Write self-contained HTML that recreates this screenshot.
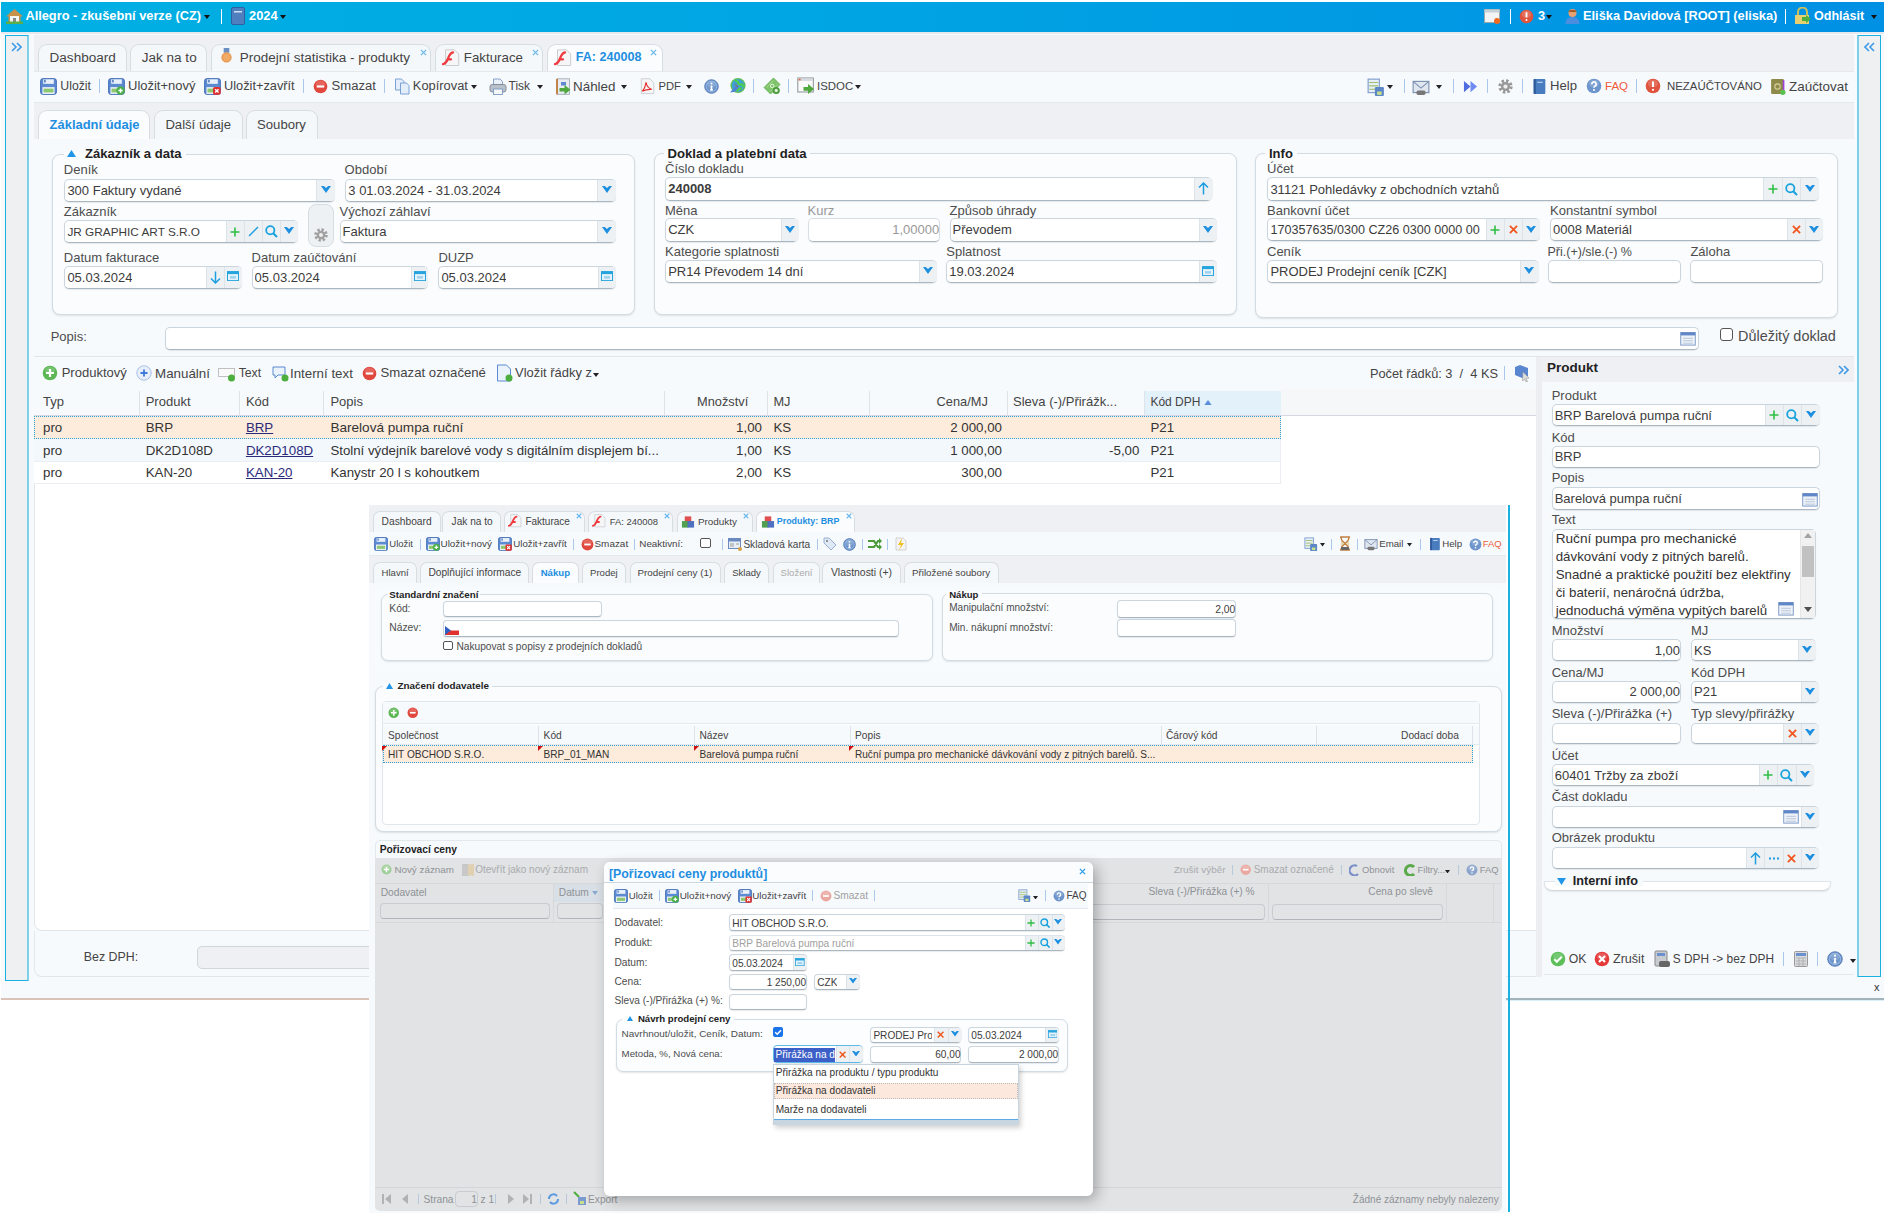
<!DOCTYPE html><html><head><meta charset="utf-8"><style>
html,body{margin:0;padding:0;background:#fff;width:1886px;height:1217px;overflow:hidden;position:relative}
.t{position:absolute;white-space:nowrap;font-family:"Liberation Sans", sans-serif}
.r{position:absolute}
body{font-family:"Liberation Sans", sans-serif}
</style></head><body>
<div class="r" style="left:1.0px;top:32.0px;width:1883.0px;height:967.0px;background:#f7fafd"></div>
<div class="r" style="left:1.0px;top:998.0px;width:399.0px;height:1.5px;background:#dcc3ba"></div>
<div class="r" style="left:1500.0px;top:998.0px;width:384.0px;height:1.5px;background:#a3b4bc"></div>
<div class="r" style="left:1500.0px;top:999.5px;width:384.0px;height:1.0px;background:#d8f0f6"></div>
<div class="r" style="left:1.0px;top:2.0px;width:1883.0px;height:30.0px;background:linear-gradient(90deg,#00b0e3 0%,#00a6e3 40%,#0090e4 100%)"></div>
<div class="r" style="left:1.0px;top:32.0px;width:1883.0px;height:2.0px;background:#e6eaee"></div>
<div class="r" style="left:5.0px;top:35.0px;width:24.0px;height:946.0px;background:#eff0f2;border:1px solid #1ab0e2;border-right:2px solid #7dd0ea;box-sizing:border-box"></div>
<svg class="r" style="left:11px;top:42px" width="11" height="10" viewBox="0 0 11 10"><path d="M1 1l4 4-4 4M6 1l4 4-4 4" stroke="#3d9ae8" stroke-width="1.6" fill="none"/></svg>
<div class="r" style="left:1857.0px;top:35.0px;width:24.0px;height:942.0px;background:#eff0f2;border:1px solid #1ab0e2;border-left:2px solid #7dd0ea;box-sizing:border-box"></div>
<svg class="r" style="left:1864px;top:42px" width="11" height="10" viewBox="0 0 11 10"><path d="M5 1L1 5l4 4M10 1L6 5l4 4" stroke="#3d9ae8" stroke-width="1.6" fill="none"/></svg>
<div class="t" style="left:1874.0px;top:980.0px;font-size:11px;line-height:14px;color:#333;font-weight:400;">x</div>
<svg class="r" style="left:5.0px;top:8.0px" width="19" height="16" viewBox="0 0 19 16"><path d="M9.5 1L1 8.5h2.5V14h12V8.5H18z" fill="#c8924a"/><rect x="5" y="8" width="9" height="6.5" fill="#f4f4f4"/><rect x="8" y="10" width="3" height="4.5" fill="#888"/><rect x="1" y="13.5" width="17" height="2.5" fill="#5cae48"/></svg>
<div class="t" style="left:25.4px;top:7.8px;font-size:12.81px;line-height:16px;color:#fff;font-weight:700;">Allegro - zkušební verze (CZ)</div>
<svg class="r" style="left:203.5px;top:14.5px" width="6" height="4" viewBox="0 0 6 4"><path d="M0 0h6L3 4z" fill="#111"/></svg>
<div class="r" style="left:220.5px;top:9.0px;width:1.3px;height:15.0px;background:#fff"></div>
<svg class="r" style="left:231.0px;top:7.0px" width="14" height="18" viewBox="0 0 14 18"><rect x="0.5" y="0.5" width="13" height="17" rx="1.5" fill="#4f7fbf" stroke="#2f5f9f"/><rect x="3" y="4" width="8" height="1.5" fill="#cfe0f5"/></svg>
<div class="t" style="left:249.0px;top:7.8px;font-size:12.86px;line-height:16px;color:#fff;font-weight:700;">2024</div>
<svg class="r" style="left:280.0px;top:14.5px" width="6" height="4" viewBox="0 0 6 4"><path d="M0 0h6L3 4z" fill="#111"/></svg>
<svg class="r" style="left:1483.5px;top:9.0px" width="17" height="15" viewBox="0 0 17 15"><rect x="0.5" y="0.5" width="15" height="13" fill="#f2f4f6" stroke="#9aa"/><rect x="0.5" y="0.5" width="15" height="3" fill="#c8d0d8"/><circle cx="13" cy="12" r="3" fill="#ee6a20"/></svg>
<div class="r" style="left:1509.5px;top:9.0px;width:1.3px;height:15.0px;background:#fff"></div>
<svg class="r" style="left:1518.5px;top:9.0px" width="15" height="15" viewBox="0 0 16 16"><circle cx="8" cy="8" r="7.3" fill="#e0543f"/><ellipse cx="8" cy="5.5" rx="5" ry="3.8" fill="#fff" opacity="0.16"/><path d="M8 3.5v5.5" stroke="#fff" stroke-width="2"/><circle cx="8" cy="11.8" r="1.1" fill="#fff"/></svg>
<div class="t" style="left:1538.0px;top:7.8px;font-size:12.8px;line-height:16px;color:#fff;font-weight:700;">3</div>
<svg class="r" style="left:1546.0px;top:14.5px" width="6" height="4" viewBox="0 0 6 4"><path d="M0 0h6L3 4z" fill="#111"/></svg>
<svg class="r" style="left:1565.0px;top:8.0px" width="15" height="16" viewBox="0 0 15 16"><circle cx="7.5" cy="5" r="4" fill="#e8a070"/><path d="M3.5 4c0-3 8-3 8 0" fill="#a05a2a"/><path d="M0.5 16c0-5 3-7 7-7s7 2 7 7z" fill="#4a8ee0"/></svg>
<div class="t" style="left:1583.0px;top:7.8px;font-size:12.82px;line-height:16px;color:#fff;font-weight:700;">Eliška Davidová [ROOT] (eliska)</div>
<div class="r" style="left:1785.0px;top:9.0px;width:1.3px;height:15.0px;background:#fff"></div>
<svg class="r" style="left:1794.0px;top:7.0px" width="17" height="18" viewBox="0 0 17 18"><path d="M4 8V5a4.5 4.5 0 0 1 9 0v3" stroke="#c8c060" stroke-width="2" fill="none"/><rect x="1" y="8" width="14" height="9" fill="#e8d070"/><path d="M8 10h4V8l5 4-5 4v-2H8z" fill="#4cae3c"/></svg>
<div class="t" style="left:1814.0px;top:7.8px;font-size:12.57px;line-height:16px;color:#fff;font-weight:700;">Odhlásit</div>
<svg class="r" style="left:1871.0px;top:14.5px" width="6" height="4" viewBox="0 0 6 4"><path d="M0 0h6L3 4z" fill="#111"/></svg>
<div class="r" style="left:34.0px;top:35.0px;width:1820.0px;height:75.0px;background:#eef0f3"></div>
<div class="r" style="left:38.0px;top:44.0px;width:89.0px;height:27.0px;box-sizing:border-box;background:#f5f8fb;border:1px solid #d6dde3;border-bottom:none;border-radius:9px 9px 0 0"></div>
<div class="t" style="left:49.6px;top:48.7px;font-size:13.53px;line-height:17px;color:#444;font-weight:400;">Dashboard</div>
<div class="r" style="left:130.0px;top:44.0px;width:77.0px;height:27.0px;box-sizing:border-box;background:#f5f8fb;border:1px solid #d6dde3;border-bottom:none;border-radius:9px 9px 0 0"></div>
<div class="t" style="left:141.8px;top:48.7px;font-size:13.53px;line-height:17px;color:#444;font-weight:400;">Jak na to</div>
<div class="r" style="left:210.7px;top:44.0px;width:220.7px;height:27.0px;box-sizing:border-box;background:#f5f8fb;border:1px solid #d6dde3;border-bottom:none;border-radius:9px 9px 0 0"></div>
<svg class="r" style="left:219.0px;top:48.0px" width="15" height="15" viewBox="0 0 16 16"><rect x="5" y="0" width="6" height="5" fill="#6a8fc0"/><circle cx="8" cy="10" r="5.5" fill="#e89a52"/><circle cx="8" cy="10" r="3.8" fill="#f0ab68"/></svg>
<div class="t" style="left:239.8px;top:48.7px;font-size:13.49px;line-height:17px;color:#444;font-weight:400;">Prodejní statistika - produkty</div>
<svg class="r" style="left:419.5px;top:48.5px" width="7" height="7" viewBox="0 0 8 8"><path d="M1 1l6 6M7 1l-6 6" stroke="#6ab8ec" stroke-width="1.5"/></svg>
<div class="r" style="left:434.8px;top:44.0px;width:108.6px;height:27.0px;box-sizing:border-box;background:#f5f8fb;border:1px solid #d6dde3;border-bottom:none;border-radius:9px 9px 0 0"></div>
<svg class="r" style="left:441.6px;top:49.0px" width="18" height="18" viewBox="0 0 18 18"><path d="M3.5 0.8h9l4.2 4.2V16.5H3.5z" fill="#f6f6f6" stroke="#c4c8cc" stroke-width="0.9"/><path d="M1 15.2C3.5 14.8 5 12 6 9.5S8 3.8 11 3.3M5.6 10.3h3.4" stroke="#ee3a40" stroke-width="2.3" fill="none" stroke-linecap="round"/></svg>
<div class="t" style="left:463.8px;top:48.7px;font-size:13.31px;line-height:17px;color:#444;font-weight:400;">Fakturace</div>
<svg class="r" style="left:531.8px;top:48.5px" width="7" height="7" viewBox="0 0 8 8"><path d="M1 1l6 6M7 1l-6 6" stroke="#6ab8ec" stroke-width="1.5"/></svg>
<div class="r" style="left:546.7px;top:44.0px;width:116.3px;height:27.0px;box-sizing:border-box;background:#fafcfe;border:1px solid #d6dde3;border-bottom:none;border-radius:9px 9px 0 0"></div>
<svg class="r" style="left:553.6px;top:49.0px" width="18" height="18" viewBox="0 0 18 18"><path d="M3.5 0.8h9l4.2 4.2V16.5H3.5z" fill="#f6f6f6" stroke="#c4c8cc" stroke-width="0.9"/><path d="M1 15.2C3.5 14.8 5 12 6 9.5S8 3.8 11 3.3M5.6 10.3h3.4" stroke="#ee3a40" stroke-width="2.3" fill="none" stroke-linecap="round"/></svg>
<div class="t" style="left:575.8px;top:49.2px;font-size:12.56px;line-height:16px;color:#1f8ee0;font-weight:700;">FA: 240008</div>
<svg class="r" style="left:650.1px;top:48.5px" width="7" height="7" viewBox="0 0 8 8"><path d="M1 1l6 6M7 1l-6 6" stroke="#6ab8ec" stroke-width="1.5"/></svg>
<div class="r" style="left:34.0px;top:71.0px;width:1820.0px;height:31.5px;background:#f7fafd;border-top:1px solid #e4e9ee;border-bottom:1px solid #e4e9ee;box-sizing:border-box"></div>
<svg class="r" style="left:40.0px;top:77.7px" width="17" height="17" viewBox="0 0 16 16"><rect x="0.6" y="0.6" width="14.8" height="14.8" rx="2" fill="#5d8bd2" stroke="#3b68b3" stroke-width="0.9"/><rect x="3" y="1.2" width="10" height="4.3" fill="#e9f0fa"/><rect x="4" y="1.6" width="1.3" height="2.6" fill="#3b68b3"/><rect x="2.3" y="8.6" width="11.4" height="6.4" fill="#eef3fa"/><rect x="3.3" y="10" width="9.4" height="3.6" fill="#8cc870"/></svg>
<div class="t" style="left:60.3px;top:78.7px;font-size:12.27px;line-height:15px;color:#444;font-weight:400;">Uložit</div>
<div class="r" style="left:99.0px;top:79.2px;width:1.0px;height:14.0px;background:#a9c8ec"></div>
<svg class="r" style="left:108.0px;top:77.7px" width="17" height="17" viewBox="0 0 16 16"><rect x="0.6" y="0.6" width="14.8" height="14.8" rx="2" fill="#5d8bd2" stroke="#3b68b3" stroke-width="0.9"/><rect x="3" y="1.2" width="10" height="4.3" fill="#e9f0fa"/><rect x="4" y="1.6" width="1.3" height="2.6" fill="#3b68b3"/><rect x="2.3" y="8.6" width="11.4" height="6.4" fill="#eef3fa"/><rect x="3.3" y="10" width="9.4" height="3.6" fill="#8cc870"/><circle cx="11.8" cy="11.8" r="4" fill="#4cb04a"/><path d="M9.8 11.8h4M11.8 9.8v4" stroke="#fff" stroke-width="1.4"/></svg>
<div class="t" style="left:128.0px;top:78.2px;font-size:12.99px;line-height:16px;color:#444;font-weight:400;">Uložit+nový</div>
<svg class="r" style="left:204.4px;top:77.7px" width="17" height="17" viewBox="0 0 16 16"><rect x="0.6" y="0.6" width="14.8" height="14.8" rx="2" fill="#5d8bd2" stroke="#3b68b3" stroke-width="0.9"/><rect x="3" y="1.2" width="10" height="4.3" fill="#e9f0fa"/><rect x="4" y="1.6" width="1.3" height="2.6" fill="#3b68b3"/><rect x="2.3" y="8.6" width="11.4" height="6.4" fill="#eef3fa"/><rect x="3.3" y="10" width="9.4" height="3.6" fill="#8cc870"/><rect x="8.5" y="8.5" width="7.2" height="7.2" rx="1.5" fill="#e03030"/><path d="M10.5 10.5l3.2 3.2M13.7 10.5l-3.2 3.2" stroke="#fff" stroke-width="1.3"/></svg>
<div class="t" style="left:224.0px;top:78.2px;font-size:12.79px;line-height:16px;color:#444;font-weight:400;">Uložit+zavřít</div>
<div class="r" style="left:303.0px;top:79.2px;width:1.0px;height:14.0px;background:#a9c8ec"></div>
<svg class="r" style="left:313.0px;top:78.7px" width="15" height="15" viewBox="0 0 16 16"><circle cx="8" cy="8" r="7.3" fill="#e0483e"/><ellipse cx="8" cy="5.5" rx="5" ry="3.8" fill="#fff" opacity="0.16"/><path d="M4 8h8" stroke="#fff" stroke-width="2.2"/></svg>
<div class="t" style="left:331.6px;top:78.2px;font-size:13.09px;line-height:16px;color:#444;font-weight:400;">Smazat</div>
<div class="r" style="left:384.0px;top:79.2px;width:1.0px;height:14.0px;background:#a9c8ec"></div>
<svg class="r" style="left:394.0px;top:77.7px" width="17" height="17" viewBox="0 0 17 17"><path d="M1.5 1h6l2.5 2.5V12h-8.5z" fill="#e4eefa" stroke="#6f98d0" stroke-width="0.9"/><path d="M6.5 5h6l2.5 2.5V16h-8.5z" fill="#e4eefa" stroke="#6f98d0" stroke-width="0.9"/></svg>
<div class="t" style="left:412.8px;top:78.2px;font-size:12.89px;line-height:16px;color:#444;font-weight:400;">Kopírovat</div>
<svg class="r" style="left:471.0px;top:85.2px" width="6" height="4" viewBox="0 0 6 4"><path d="M0 0h6L3 4z" fill="#222"/></svg>
<svg class="r" style="left:488.7px;top:77.7px" width="18" height="18" viewBox="0 0 18 18"><path d="M4.5 1h6.5l2.5 2.5V7h-9z" fill="#e8f0fa" stroke="#7c9ac4" stroke-width="0.9"/><rect x="1" y="6.5" width="16" height="7.5" rx="2.2" fill="#b8c0ca" stroke="#7e8894" stroke-width="0.9"/><rect x="4.5" y="11" width="9" height="5.5" fill="#f4f6f8" stroke="#7c9ac4" stroke-width="0.9"/></svg>
<div class="t" style="left:508.6px;top:78.7px;font-size:11.96px;line-height:15px;color:#444;font-weight:400;">Tisk</div>
<svg class="r" style="left:536.6px;top:85.2px" width="6" height="4" viewBox="0 0 6 4"><path d="M0 0h6L3 4z" fill="#222"/></svg>
<svg class="r" style="left:555.4px;top:77.7px" width="17" height="17" viewBox="0 0 17 17"><rect x="2.5" y="0.8" width="12" height="15.5" fill="#e8ecf2" stroke="#9aa4b0" stroke-width="0.8"/><rect x="1" y="0.8" width="2" height="15.5" fill="#c0844a"/><rect x="6" y="4" width="5" height="3.5" fill="#5f88d0"/><path d="M4.5 10h5V7l6 4.8-6 4.8v-3H4.5z" fill="#4fa83e"/></svg>
<div class="t" style="left:573.0px;top:77.7px;font-size:13.41px;line-height:17px;color:#444;font-weight:400;">Náhled</div>
<svg class="r" style="left:621.0px;top:85.2px" width="6" height="4" viewBox="0 0 6 4"><path d="M0 0h6L3 4z" fill="#222"/></svg>
<svg class="r" style="left:638.4px;top:77.7px" width="17" height="17" viewBox="0 0 18 18"><path d="M3.5 0.8h9l4.2 4.2V16.5H3.5z" fill="#f6f6f6" stroke="#c4c8cc" stroke-width="0.9"/><path d="M4.5 14c2.5-2.5 3.5-6 4-9.5.6 3.5 2.5 6.5 6 7.5-3.5-.3-7 .5-10 2z" stroke="#e83030" stroke-width="1.3" fill="none"/></svg>
<div class="t" style="left:658.5px;top:79.2px;font-size:11.22px;line-height:14px;color:#444;font-weight:400;">PDF</div>
<svg class="r" style="left:686.0px;top:85.2px" width="6" height="4" viewBox="0 0 6 4"><path d="M0 0h6L3 4z" fill="#222"/></svg>
<svg class="r" style="left:703.8px;top:78.7px" width="15" height="15" viewBox="0 0 16 16"><circle cx="8" cy="8" r="7.3" fill="#6d95cc"/><ellipse cx="8" cy="5.5" rx="5" ry="3.8" fill="#fff" opacity="0.16"/><circle cx="8" cy="8" r="7.3" fill="none" stroke="#4a70b0" stroke-width="0.8"/><circle cx="8" cy="8" r="5.6" fill="none" stroke="#a8c4e8" stroke-width="0.7"/><path d="M8 7v4.6M6.6 11.6h2.8" stroke="#fff" stroke-width="1.8"/><circle cx="8" cy="4.7" r="1.1" fill="#fff"/></svg>
<svg class="r" style="left:728.5px;top:77.2px" width="18" height="18" viewBox="0 0 18 18"><circle cx="9" cy="8.5" r="7.6" fill="#5fbf5a"/><circle cx="9" cy="8.5" r="6.2" fill="#3f9fd8"/><path d="M6 3.5c2.5.5 4 2 3.5 4.5M10.5 8c2-1.5 3.5-.5 4 2M8 14c1-2 3-3 5-2.5" stroke="#4ccf4a" stroke-width="2.2" fill="none"/><path d="M1 15.5l2.5-3 4-4 2.2 2.2-4 4z" fill="#4f80d8"/><path d="M6 7l3 3" stroke="#777" stroke-width="1.2"/></svg>
<div class="r" style="left:753.4px;top:79.2px;width:1.0px;height:14.0px;background:#a9c8ec"></div>
<svg class="r" style="left:763.0px;top:77.2px" width="18" height="18" viewBox="0 0 18 18"><path d="M1 10.5L10.5 1 17 7.5 7.5 17z" fill="#7fc36a" stroke="#5ea84a" stroke-width="0.8"/><path d="M3.5 10.5l7-7M7.5 14.5l7-7" stroke="#a8dc94" stroke-width="0.8"/><circle cx="9.2" cy="9" r="1.8" fill="none" stroke="#e8f8e0" stroke-width="1"/><circle cx="13.2" cy="13.5" r="3.6" fill="#4a9a3a"/><circle cx="13.2" cy="13.5" r="1.7" fill="#d8f0d0"/></svg>
<div class="r" style="left:788.3px;top:79.2px;width:1.0px;height:14.0px;background:#a9c8ec"></div>
<svg class="r" style="left:797.4px;top:77.2px" width="18" height="18" viewBox="0 0 18 18"><rect x="0.8" y="1" width="15.5" height="14" fill="#fafafa" stroke="#8a8f96" stroke-width="1"/><rect x="1.3" y="1.5" width="14.5" height="2.5" fill="#d8dce0"/><rect x="1.6" y="1.8" width="2" height="1.6" fill="#e06040"/><path d="M6.5 10h4.5V7L17 12l-6 5v-3.2H6.5z" fill="#4fa83e"/></svg>
<div class="t" style="left:817.0px;top:79.2px;font-size:11.43px;line-height:14px;color:#444;font-weight:400;">ISDOC</div>
<svg class="r" style="left:855.0px;top:85.2px" width="6" height="4" viewBox="0 0 6 4"><path d="M0 0h6L3 4z" fill="#222"/></svg>
<svg class="r" style="left:1367.0px;top:77.7px" width="18" height="18" viewBox="0 0 16 16"><rect x="1" y="1" width="10" height="12" fill="#e6eef8" stroke="#7d9ccc"/><path d="M2 4h8M2 7h8M2 10h8" stroke="#9fc06a"/><rect x="7" y="8" width="8" height="8" rx="1" fill="#5b87c9"/><rect x="9" y="12" width="4" height="3" fill="#c9e08a"/></svg>
<svg class="r" style="left:1387.0px;top:85.2px" width="6" height="4" viewBox="0 0 6 4"><path d="M0 0h6L3 4z" fill="#222"/></svg>
<div class="r" style="left:1404.0px;top:79.2px;width:1.0px;height:14.0px;background:#a9c8ec"></div>
<svg class="r" style="left:1412.0px;top:77.7px" width="18" height="18" viewBox="0 0 16 16"><rect x="1" y="3" width="14" height="10" fill="#dfe6f0" stroke="#7b8fb0"/><path d="M1 3l7 6 7-6" stroke="#7b8fb0" fill="none"/><rect x="4" y="11" width="8" height="4" rx="1.5" fill="#777"/></svg>
<svg class="r" style="left:1436.0px;top:85.2px" width="6" height="4" viewBox="0 0 6 4"><path d="M0 0h6L3 4z" fill="#222"/></svg>
<div class="r" style="left:1453.0px;top:79.2px;width:1.0px;height:14.0px;background:#a9c8ec"></div>
<svg class="r" style="left:1463.0px;top:78.7px" width="15" height="15" viewBox="0 0 16 16"><path d="M1 2l7 6-7 6z" fill="#4f6de0"/><path d="M8 2l7 6-7 6z" fill="#6f8af0"/></svg>
<div class="r" style="left:1487.0px;top:79.2px;width:1.0px;height:14.0px;background:#a9c8ec"></div>
<svg class="r" style="left:1497.0px;top:77.7px" width="17" height="17" viewBox="0 0 16 16"><circle cx="8" cy="8" r="5" fill="none" stroke="#9a9a9a" stroke-width="3.5" stroke-dasharray="2.2 1.7"/><circle cx="8" cy="8" r="4.3" fill="#9a9a9a"/><circle cx="8" cy="8" r="2" fill="#eee"/></svg>
<div class="r" style="left:1522.0px;top:79.2px;width:1.0px;height:14.0px;background:#a9c8ec"></div>
<svg class="r" style="left:1531.0px;top:77.7px" width="17" height="17" viewBox="0 0 16 16"><rect x="2.5" y="1" width="11" height="14" rx="1" fill="#4a7cc0"/><rect x="2.5" y="1" width="2" height="14" fill="#2f5a9a"/><rect x="6" y="3.5" width="5" height="1" fill="#cfe0f5"/></svg>
<div class="t" style="left:1550.0px;top:78.2px;font-size:13.12px;line-height:16px;color:#444;font-weight:400;">Help</div>
<svg class="r" style="left:1586.0px;top:78.2px" width="16" height="16" viewBox="0 0 16 16"><circle cx="8" cy="8" r="7.3" fill="#6d95cc"/><ellipse cx="8" cy="5.5" rx="5" ry="3.8" fill="#fff" opacity="0.16"/><path d="M5.8 6.2a2.2 2.2 0 1 1 3 2c-.7.3-.8.8-.8 1.6" stroke="#fff" stroke-width="1.7" fill="none"/><circle cx="8" cy="12" r="1" fill="#fff"/></svg>
<div class="t" style="left:1605.0px;top:79.2px;font-size:11.5px;line-height:14px;color:#ef5a3a;font-weight:400;">FAQ</div>
<div class="r" style="left:1635.6px;top:79.2px;width:1.0px;height:14.0px;background:#a9c8ec"></div>
<svg class="r" style="left:1645.0px;top:78.2px" width="16" height="16" viewBox="0 0 16 16"><circle cx="8" cy="8" r="7.3" fill="#e0543f"/><ellipse cx="8" cy="5.5" rx="5" ry="3.8" fill="#fff" opacity="0.16"/><path d="M8 3.5v5.5" stroke="#fff" stroke-width="2"/><circle cx="8" cy="11.8" r="1.1" fill="#fff"/></svg>
<div class="t" style="left:1667.0px;top:79.2px;font-size:11.42px;line-height:14px;color:#444;font-weight:400;">NEZAÚČTOVÁNO</div>
<svg class="r" style="left:1769.0px;top:77.7px" width="17" height="17" viewBox="0 0 16 16"><rect x="2" y="1" width="12" height="14" rx="1" fill="#8e8a4a"/><rect x="13" y="2" width="1.5" height="10" fill="#a040e0"/><circle cx="8" cy="8" r="2.5" fill="none" stroke="#d8d4a0"/><circle cx="13" cy="13.5" r="2.5" fill="#5ac050"/></svg>
<div class="t" style="left:1789.0px;top:77.7px;font-size:13.43px;line-height:17px;color:#444;font-weight:400;">Zaúčtovat</div>
<div class="r" style="left:34.0px;top:102.5px;width:1820.0px;height:36.5px;background:#eef0f3"></div>
<div class="r" style="left:38.0px;top:110.0px;width:112.0px;height:29.0px;box-sizing:border-box;background:#fafcfe;border:1px solid #d6dde3;border-bottom:none;border-radius:9px 9px 0 0"></div>
<div class="t" style="left:49.6px;top:116.5px;font-size:12.95px;line-height:16px;color:#1f8ee0;font-weight:700;">Základní údaje</div>
<div class="r" style="left:154.0px;top:110.0px;width:89.0px;height:29.0px;box-sizing:border-box;background:#f5f8fb;border:1px solid #d6dde3;border-bottom:none;border-radius:9px 9px 0 0"></div>
<div class="t" style="left:165.4px;top:116.5px;font-size:13.11px;line-height:16px;color:#444;font-weight:400;">Další údaje</div>
<div class="r" style="left:246.4px;top:110.0px;width:71.2px;height:29.0px;box-sizing:border-box;background:#f5f8fb;border:1px solid #d6dde3;border-bottom:none;border-radius:9px 9px 0 0"></div>
<div class="t" style="left:257.0px;top:116.5px;font-size:13.15px;line-height:16px;color:#444;font-weight:400;">Soubory</div>
<div class="r" style="left:34.0px;top:139.0px;width:1820.0px;height:218.0px;background:#f7fafd;border-bottom:1px solid #dfe5ea;box-sizing:border-box"></div>
<div class="r" style="left:52.4px;top:154.0px;width:582.4px;height:161.0px;box-sizing:border-box;background:#fafcfe;border:1px solid #d3dce3;border-radius:8px;box-shadow:0 1px 2px rgba(0,0,0,0.10)"></div>
<div class="r" style="left:64.0px;top:152.0px;width:122.0px;height:5.0px;background:#fafcfe"></div>
<svg class="r" style="left:67.0px;top:149.5px" width="9" height="7" viewBox="0 0 9 7"><path d="M0 7L4.5 0 9 7z" fill="#2196e8"/></svg>
<div class="t" style="left:85.0px;top:146.0px;font-size:13.07px;line-height:16px;color:#222;font-weight:700;">Zákazník a data</div>
<div class="t" style="left:63.8px;top:162.3px;font-size:13px;line-height:16px;color:#4d4d4d;font-weight:400;">Deník</div>
<div class="r" style="left:64.4px;top:179.0px;width:271.0px;height:23.0px;box-sizing:border-box;background:#fff;border:1px solid #cbd5dd;border-bottom-color:#a9b7c2;border-radius:5px;box-shadow:0 1px 1px rgba(0,0,0,0.08)"></div>
<div class="r" style="left:316.4px;top:180.0px;width:19.0px;height:21.0px;background:#eef1f4;border-left:1px solid #dce3e9;box-sizing:border-box;border-radius:0 4px 4px 0;"></div>
<svg class="r" style="left:320.9px;top:186.2px" width="10.0" height="7.0" viewBox="0 0 10 7"><path d="M0 0L2.8 0 5 2 7.2 0 10 0 5 7z" fill="#1d8fe0"/></svg>
<div class="t" style="left:67.4px;top:183.0px;font-size:13px;line-height:16px;color:#3c3c3c;font-weight:400;overflow:hidden;max-width:248.0px">300 Faktury vydané</div>
<div class="t" style="left:344.6px;top:162.3px;font-size:13px;line-height:16px;color:#4d4d4d;font-weight:400;">Období</div>
<div class="r" style="left:345.3px;top:179.0px;width:270.9px;height:23.0px;box-sizing:border-box;background:#fff;border:1px solid #cbd5dd;border-bottom-color:#a9b7c2;border-radius:5px;box-shadow:0 1px 1px rgba(0,0,0,0.08)"></div>
<div class="r" style="left:597.2px;top:180.0px;width:19.0px;height:21.0px;background:#eef1f4;border-left:1px solid #dce3e9;box-sizing:border-box;border-radius:0 4px 4px 0;"></div>
<svg class="r" style="left:601.7px;top:186.2px" width="10.0" height="7.0" viewBox="0 0 10 7"><path d="M0 0L2.8 0 5 2 7.2 0 10 0 5 7z" fill="#1d8fe0"/></svg>
<div class="t" style="left:348.3px;top:183.0px;font-size:13px;line-height:16px;color:#3c3c3c;font-weight:400;overflow:hidden;max-width:247.9px">3 01.03.2024 - 31.03.2024</div>
<div class="t" style="left:63.8px;top:203.7px;font-size:13px;line-height:16px;color:#4d4d4d;font-weight:400;">Zákazník</div>
<div class="r" style="left:64.4px;top:220.3px;width:233.6px;height:22.7px;box-sizing:border-box;background:#fff;border:1px solid #cbd5dd;border-bottom-color:#a9b7c2;border-radius:5px;box-shadow:0 1px 1px rgba(0,0,0,0.08)"></div>
<div class="r" style="left:280.0px;top:221.3px;width:18.0px;height:20.7px;background:#eef1f4;border-left:1px solid #dce3e9;box-sizing:border-box;border-radius:0 4px 4px 0;"></div>
<svg class="r" style="left:284.0px;top:227.3px" width="10.0" height="7.0" viewBox="0 0 10 7"><path d="M0 0L2.8 0 5 2 7.2 0 10 0 5 7z" fill="#1d8fe0"/></svg>
<div class="r" style="left:262.0px;top:221.3px;width:18.0px;height:20.7px;background:#eef1f4;border-left:1px solid #dce3e9;box-sizing:border-box;"></div>
<svg class="r" style="left:264.5px;top:225.2px" width="13.0" height="13.0" viewBox="0 0 13 13"><circle cx="5.3" cy="5.3" r="4.1" stroke="#18a2de" stroke-width="1.8" fill="none"/><path d="M8.2 8.2l3.8 3.8" stroke="#18a2de" stroke-width="2"/></svg>
<div class="r" style="left:244.0px;top:221.3px;width:18.0px;height:20.7px;background:#eef1f4;border-left:1px solid #dce3e9;box-sizing:border-box;"></div>
<svg class="r" style="left:247.5px;top:226.2px" width="11.0" height="11.0" viewBox="0 0 11 11"><path d="M1 10L10 1" stroke="#1d9ee0" stroke-width="1.5"/></svg>
<div class="r" style="left:226.0px;top:221.3px;width:18.0px;height:20.7px;background:#eef1f4;border-left:1px solid #dce3e9;box-sizing:border-box;"></div>
<svg class="r" style="left:230.0px;top:226.7px" width="10.0" height="10.0" viewBox="0 0 10 10"><path d="M5 0.5v9M0.5 5h9" stroke="#2fbf45" stroke-width="1.6"/></svg>
<div class="t" style="left:67.4px;top:224.7px;font-size:11.8px;line-height:15px;color:#3c3c3c;font-weight:400;overflow:hidden;max-width:157.6px">JR GRAPHIC ART S.R.O</div>
<div class="r" style="left:307.8px;top:204.0px;width:25.8px;height:43.0px;background:#eef1f4;border:1px solid #d5dde3;border-radius:8px;box-sizing:border-box"></div>
<svg class="r" style="left:312.5px;top:227.0px" width="16" height="16" viewBox="0 0 16 16"><circle cx="8" cy="8" r="5" fill="none" stroke="#a0a0a0" stroke-width="3.5" stroke-dasharray="2.2 1.7"/><circle cx="8" cy="8" r="4.3" fill="#a0a0a0"/><circle cx="8" cy="8" r="2" fill="#eee"/></svg>
<div class="t" style="left:339.5px;top:203.7px;font-size:13px;line-height:16px;color:#4d4d4d;font-weight:400;">Výchozí záhlaví</div>
<div class="r" style="left:339.5px;top:220.3px;width:276.7px;height:22.7px;box-sizing:border-box;background:#fff;border:1px solid #cbd5dd;border-bottom-color:#a9b7c2;border-radius:5px;box-shadow:0 1px 1px rgba(0,0,0,0.08)"></div>
<div class="r" style="left:597.2px;top:221.3px;width:19.0px;height:20.7px;background:#eef1f4;border-left:1px solid #dce3e9;box-sizing:border-box;border-radius:0 4px 4px 0;"></div>
<svg class="r" style="left:601.7px;top:227.3px" width="10.0" height="7.0" viewBox="0 0 10 7"><path d="M0 0L2.8 0 5 2 7.2 0 10 0 5 7z" fill="#1d8fe0"/></svg>
<div class="t" style="left:342.5px;top:224.2px;font-size:13px;line-height:16px;color:#3c3c3c;font-weight:400;overflow:hidden;max-width:253.7px">Faktura</div>
<div class="t" style="left:63.8px;top:249.5px;font-size:13px;line-height:16px;color:#4d4d4d;font-weight:400;">Datum fakturace</div>
<div class="r" style="left:64.4px;top:266.0px;width:177.9px;height:22.5px;box-sizing:border-box;background:#fff;border:1px solid #cbd5dd;border-bottom-color:#a9b7c2;border-radius:5px;box-shadow:0 1px 1px rgba(0,0,0,0.08)"></div>
<div class="r" style="left:224.3px;top:267.0px;width:18.0px;height:20.5px;background:#eef1f4;border-left:1px solid #dce3e9;box-sizing:border-box;border-radius:0 4px 4px 0;"></div>
<svg class="r" style="left:227.3px;top:271.2px" width="12.0" height="10.2" viewBox="0 0 12 10"><rect x="0.5" y="0.5" width="11" height="9" fill="#e4f2fb" stroke="#26a4de"/><rect x="0.5" y="0.5" width="11" height="2.5" fill="#26a4de"/><rect x="3" y="5" width="6" height="2.5" fill="#9fd2ee"/></svg>
<div class="r" style="left:206.3px;top:267.0px;width:18.0px;height:20.5px;background:#eef1f4;border-left:1px solid #dce3e9;box-sizing:border-box;"></div>
<svg class="r" style="left:208.8px;top:270.8px" width="13.0" height="13.0" viewBox="0 0 13 13"><path d="M6.5 0.5v11M2 7.5l4.5 4.5 4.5-4.5" stroke="#1d9ee0" stroke-width="1.5" fill="none"/></svg>
<div class="t" style="left:67.4px;top:269.8px;font-size:13px;line-height:16px;color:#3c3c3c;font-weight:400;overflow:hidden;max-width:137.9px">05.03.2024</div>
<div class="t" style="left:251.6px;top:249.5px;font-size:13px;line-height:16px;color:#4d4d4d;font-weight:400;">Datum zaúčtování</div>
<div class="r" style="left:251.6px;top:266.0px;width:176.8px;height:22.5px;box-sizing:border-box;background:#fff;border:1px solid #cbd5dd;border-bottom-color:#a9b7c2;border-radius:5px;box-shadow:0 1px 1px rgba(0,0,0,0.08)"></div>
<div class="r" style="left:410.9px;top:267.0px;width:17.5px;height:20.5px;background:#eef1f4;border-left:1px solid #dce3e9;box-sizing:border-box;border-radius:0 4px 4px 0;"></div>
<svg class="r" style="left:413.6px;top:271.2px" width="12.0" height="10.2" viewBox="0 0 12 10"><rect x="0.5" y="0.5" width="11" height="9" fill="#e4f2fb" stroke="#26a4de"/><rect x="0.5" y="0.5" width="11" height="2.5" fill="#26a4de"/><rect x="3" y="5" width="6" height="2.5" fill="#9fd2ee"/></svg>
<div class="t" style="left:254.6px;top:269.8px;font-size:13px;line-height:16px;color:#3c3c3c;font-weight:400;overflow:hidden;max-width:155.3px">05.03.2024</div>
<div class="t" style="left:438.4px;top:249.5px;font-size:13px;line-height:16px;color:#4d4d4d;font-weight:400;">DUZP</div>
<div class="r" style="left:438.4px;top:266.0px;width:177.8px;height:22.5px;box-sizing:border-box;background:#fff;border:1px solid #cbd5dd;border-bottom-color:#a9b7c2;border-radius:5px;box-shadow:0 1px 1px rgba(0,0,0,0.08)"></div>
<div class="r" style="left:597.7px;top:267.0px;width:18.5px;height:20.5px;background:#eef1f4;border-left:1px solid #dce3e9;box-sizing:border-box;border-radius:0 4px 4px 0;"></div>
<svg class="r" style="left:601.0px;top:271.2px" width="12.0" height="10.2" viewBox="0 0 12 10"><rect x="0.5" y="0.5" width="11" height="9" fill="#e4f2fb" stroke="#26a4de"/><rect x="0.5" y="0.5" width="11" height="2.5" fill="#26a4de"/><rect x="3" y="5" width="6" height="2.5" fill="#9fd2ee"/></svg>
<div class="t" style="left:441.4px;top:269.8px;font-size:13px;line-height:16px;color:#3c3c3c;font-weight:400;overflow:hidden;max-width:155.3px">05.03.2024</div>
<div class="r" style="left:653.6px;top:153.3px;width:583.1px;height:162.1px;box-sizing:border-box;background:#fafcfe;border:1px solid #d3dce3;border-radius:8px;box-shadow:0 1px 2px rgba(0,0,0,0.10)"></div>
<div class="r" style="left:664.0px;top:151.3px;width:146.0px;height:5.0px;background:#fafcfe"></div>
<div class="t" style="left:667.5px;top:146.0px;font-size:13.11px;line-height:16px;color:#222;font-weight:700;">Doklad a platební data</div>
<div class="t" style="left:665.0px;top:160.8px;font-size:13px;line-height:16px;color:#4d4d4d;font-weight:400;">Číslo dokladu</div>
<div class="r" style="left:665.2px;top:177.0px;width:547.3px;height:23.5px;box-sizing:border-box;background:#fff;border:1px solid #cbd5dd;border-bottom-color:#a9b7c2;border-radius:5px;box-shadow:0 1px 1px rgba(0,0,0,0.08)"></div>
<div class="r" style="left:1193.5px;top:178.0px;width:19.0px;height:21.5px;background:#eef1f4;border-left:1px solid #dce3e9;box-sizing:border-box;border-radius:0 4px 4px 0;"></div>
<svg class="r" style="left:1196.5px;top:182.2px" width="13.0" height="13.0" viewBox="0 0 13 13"><path d="M6.5 12.5v-11M2 5.5l4.5-4.5 4.5 4.5" stroke="#1d9ee0" stroke-width="1.5" fill="none"/></svg>
<div class="t" style="left:668.2px;top:181.2px;font-size:13px;line-height:16px;color:#3c3c3c;font-weight:700;overflow:hidden;max-width:524.3px">240008</div>
<div class="t" style="left:665.0px;top:203.0px;font-size:13px;line-height:16px;color:#4d4d4d;font-weight:400;">Měna</div>
<div class="t" style="left:807.6px;top:203.0px;font-size:13px;line-height:16px;color:#999;font-weight:400;">Kurz</div>
<div class="t" style="left:949.5px;top:203.0px;font-size:13px;line-height:16px;color:#4d4d4d;font-weight:400;">Způsob úhrady</div>
<div class="r" style="left:665.2px;top:218.3px;width:133.3px;height:23.3px;box-sizing:border-box;background:#fff;border:1px solid #cbd5dd;border-bottom-color:#a9b7c2;border-radius:5px;box-shadow:0 1px 1px rgba(0,0,0,0.08)"></div>
<div class="r" style="left:780.5px;top:219.3px;width:18.0px;height:21.3px;background:#eef1f4;border-left:1px solid #dce3e9;box-sizing:border-box;border-radius:0 4px 4px 0;"></div>
<svg class="r" style="left:784.5px;top:225.6px" width="10.0" height="7.0" viewBox="0 0 10 7"><path d="M0 0L2.8 0 5 2 7.2 0 10 0 5 7z" fill="#1d8fe0"/></svg>
<div class="t" style="left:668.2px;top:222.4px;font-size:13px;line-height:16px;color:#3c3c3c;font-weight:400;overflow:hidden;max-width:111.3px">CZK</div>
<div class="r" style="left:807.6px;top:218.3px;width:132.6px;height:23.3px;box-sizing:border-box;background:#fff;border:1px solid #d8dee3;border-bottom-color:#a9b7c2;border-radius:5px;box-shadow:0 1px 1px rgba(0,0,0,0.08)"></div>
<div class="t" style="right:946.8px;top:222.4px;font-size:13px;line-height:16px;color:#999;font-weight:400;">1,00000</div>
<div class="r" style="left:949.5px;top:218.3px;width:267.8px;height:23.3px;box-sizing:border-box;background:#fff;border:1px solid #cbd5dd;border-bottom-color:#a9b7c2;border-radius:5px;box-shadow:0 1px 1px rgba(0,0,0,0.08)"></div>
<div class="r" style="left:1199.3px;top:219.3px;width:18.0px;height:21.3px;background:#eef1f4;border-left:1px solid #dce3e9;box-sizing:border-box;border-radius:0 4px 4px 0;"></div>
<svg class="r" style="left:1203.3px;top:225.6px" width="10.0" height="7.0" viewBox="0 0 10 7"><path d="M0 0L2.8 0 5 2 7.2 0 10 0 5 7z" fill="#1d8fe0"/></svg>
<div class="t" style="left:952.5px;top:222.4px;font-size:13px;line-height:16px;color:#3c3c3c;font-weight:400;overflow:hidden;max-width:245.8px">Převodem</div>
<div class="t" style="left:665.0px;top:244.3px;font-size:13px;line-height:16px;color:#4d4d4d;font-weight:400;">Kategorie splatnosti</div>
<div class="t" style="left:946.3px;top:244.3px;font-size:13px;line-height:16px;color:#4d4d4d;font-weight:400;">Splatnost</div>
<div class="r" style="left:665.2px;top:260.4px;width:271.4px;height:22.6px;box-sizing:border-box;background:#fff;border:1px solid #cbd5dd;border-bottom-color:#a9b7c2;border-radius:5px;box-shadow:0 1px 1px rgba(0,0,0,0.08)"></div>
<div class="r" style="left:918.6px;top:261.4px;width:18.0px;height:20.6px;background:#eef1f4;border-left:1px solid #dce3e9;box-sizing:border-box;border-radius:0 4px 4px 0;"></div>
<svg class="r" style="left:922.6px;top:267.4px" width="10.0" height="7.0" viewBox="0 0 10 7"><path d="M0 0L2.8 0 5 2 7.2 0 10 0 5 7z" fill="#1d8fe0"/></svg>
<div class="t" style="left:668.2px;top:264.2px;font-size:13px;line-height:16px;color:#3c3c3c;font-weight:400;overflow:hidden;max-width:249.4px">PR14 Převodem 14 dní</div>
<div class="r" style="left:946.3px;top:260.4px;width:271.0px;height:22.6px;box-sizing:border-box;background:#fff;border:1px solid #cbd5dd;border-bottom-color:#a9b7c2;border-radius:5px;box-shadow:0 1px 1px rgba(0,0,0,0.08)"></div>
<div class="r" style="left:1199.3px;top:261.4px;width:18.0px;height:20.6px;background:#eef1f4;border-left:1px solid #dce3e9;box-sizing:border-box;border-radius:0 4px 4px 0;"></div>
<svg class="r" style="left:1202.3px;top:265.7px" width="12.0" height="10.2" viewBox="0 0 12 10"><rect x="0.5" y="0.5" width="11" height="9" fill="#e4f2fb" stroke="#26a4de"/><rect x="0.5" y="0.5" width="11" height="2.5" fill="#26a4de"/><rect x="3" y="5" width="6" height="2.5" fill="#9fd2ee"/></svg>
<div class="t" style="left:949.3px;top:264.2px;font-size:13px;line-height:16px;color:#3c3c3c;font-weight:400;overflow:hidden;max-width:249.0px">19.03.2024</div>
<div class="r" style="left:1255.4px;top:153.3px;width:583.0px;height:164.7px;box-sizing:border-box;background:#fafcfe;border:1px solid #d3dce3;border-radius:8px;box-shadow:0 1px 2px rgba(0,0,0,0.10)"></div>
<div class="r" style="left:1265.0px;top:151.3px;width:32.0px;height:5.0px;background:#fafcfe"></div>
<div class="t" style="left:1269.0px;top:146.0px;font-size:13px;line-height:16px;color:#222;font-weight:700;">Info</div>
<div class="t" style="left:1267.0px;top:160.7px;font-size:13px;line-height:16px;color:#4d4d4d;font-weight:400;">Účet</div>
<div class="r" style="left:1267.4px;top:177.0px;width:551.4px;height:24.0px;box-sizing:border-box;background:#fff;border:1px solid #cbd5dd;border-bottom-color:#a9b7c2;border-radius:5px;box-shadow:0 1px 1px rgba(0,0,0,0.08)"></div>
<div class="r" style="left:1800.3px;top:178.0px;width:18.5px;height:22.0px;background:#eef1f4;border-left:1px solid #dce3e9;box-sizing:border-box;border-radius:0 4px 4px 0;"></div>
<svg class="r" style="left:1804.5px;top:184.7px" width="10.0" height="7.0" viewBox="0 0 10 7"><path d="M0 0L2.8 0 5 2 7.2 0 10 0 5 7z" fill="#1d8fe0"/></svg>
<div class="r" style="left:1781.8px;top:178.0px;width:18.5px;height:22.0px;background:#eef1f4;border-left:1px solid #dce3e9;box-sizing:border-box;"></div>
<svg class="r" style="left:1784.5px;top:182.5px" width="13.0" height="13.0" viewBox="0 0 13 13"><circle cx="5.3" cy="5.3" r="4.1" stroke="#18a2de" stroke-width="1.8" fill="none"/><path d="M8.2 8.2l3.8 3.8" stroke="#18a2de" stroke-width="2"/></svg>
<div class="r" style="left:1763.3px;top:178.0px;width:18.5px;height:22.0px;background:#eef1f4;border-left:1px solid #dce3e9;box-sizing:border-box;"></div>
<svg class="r" style="left:1767.5px;top:184.0px" width="10.0" height="10.0" viewBox="0 0 10 10"><path d="M5 0.5v9M0.5 5h9" stroke="#2fbf45" stroke-width="1.6"/></svg>
<div class="t" style="left:1270.4px;top:181.5px;font-size:13px;line-height:16px;color:#3c3c3c;font-weight:400;overflow:hidden;max-width:491.9px">31121 Pohledávky z obchodních vztahů</div>
<div class="t" style="left:1267.0px;top:202.5px;font-size:13px;line-height:16px;color:#4d4d4d;font-weight:400;">Bankovní účet</div>
<div class="t" style="left:1550.0px;top:202.5px;font-size:13px;line-height:16px;color:#4d4d4d;font-weight:400;">Konstantní symbol</div>
<div class="r" style="left:1267.4px;top:218.4px;width:273.0px;height:22.9px;box-sizing:border-box;background:#fff;border:1px solid #cbd5dd;border-bottom-color:#a9b7c2;border-radius:5px;box-shadow:0 1px 1px rgba(0,0,0,0.08)"></div>
<div class="r" style="left:1522.1px;top:219.4px;width:18.3px;height:20.9px;background:#eef1f4;border-left:1px solid #dce3e9;box-sizing:border-box;border-radius:0 4px 4px 0;"></div>
<svg class="r" style="left:1526.3px;top:225.6px" width="10.0" height="7.0" viewBox="0 0 10 7"><path d="M0 0L2.8 0 5 2 7.2 0 10 0 5 7z" fill="#1d8fe0"/></svg>
<div class="r" style="left:1503.8px;top:219.4px;width:18.3px;height:20.9px;background:#eef1f4;border-left:1px solid #dce3e9;box-sizing:border-box;"></div>
<svg class="r" style="left:1508.5px;top:225.4px" width="9.0" height="9.0" viewBox="0 0 10 10"><path d="M1 1l8 8M9 1l-8 8" stroke="#f0561e" stroke-width="2"/></svg>
<div class="r" style="left:1485.5px;top:219.4px;width:18.3px;height:20.9px;background:#eef1f4;border-left:1px solid #dce3e9;box-sizing:border-box;"></div>
<svg class="r" style="left:1489.7px;top:224.9px" width="10.0" height="10.0" viewBox="0 0 10 10"><path d="M5 0.5v9M0.5 5h9" stroke="#2fbf45" stroke-width="1.6"/></svg>
<div class="t" style="left:1270.4px;top:222.4px;font-size:12.6px;line-height:16px;color:#3c3c3c;font-weight:400;overflow:hidden;max-width:214.1px">170357635/0300 CZ26 0300 0000 00</div>
<div class="r" style="left:1550.0px;top:218.4px;width:273.3px;height:22.9px;box-sizing:border-box;background:#fff;border:1px solid #cbd5dd;border-bottom-color:#a9b7c2;border-radius:5px;box-shadow:0 1px 1px rgba(0,0,0,0.08)"></div>
<div class="r" style="left:1805.1px;top:219.4px;width:18.2px;height:20.9px;background:#eef1f4;border-left:1px solid #dce3e9;box-sizing:border-box;border-radius:0 4px 4px 0;"></div>
<svg class="r" style="left:1809.2px;top:225.6px" width="10.0" height="7.0" viewBox="0 0 10 7"><path d="M0 0L2.8 0 5 2 7.2 0 10 0 5 7z" fill="#1d8fe0"/></svg>
<div class="r" style="left:1786.9px;top:219.4px;width:18.2px;height:20.9px;background:#eef1f4;border-left:1px solid #dce3e9;box-sizing:border-box;"></div>
<svg class="r" style="left:1791.5px;top:225.4px" width="9.0" height="9.0" viewBox="0 0 10 10"><path d="M1 1l8 8M9 1l-8 8" stroke="#f0561e" stroke-width="2"/></svg>
<div class="t" style="left:1553.0px;top:222.4px;font-size:13px;line-height:16px;color:#3c3c3c;font-weight:400;overflow:hidden;max-width:232.9px">0008 Materiál</div>
<div class="t" style="left:1267.0px;top:244.3px;font-size:13px;line-height:16px;color:#4d4d4d;font-weight:400;">Ceník</div>
<div class="t" style="left:1547.5px;top:244.3px;font-size:12.5px;line-height:16px;color:#4d4d4d;font-weight:400;">Při.(+)/sle.(-) %</div>
<div class="t" style="left:1690.4px;top:244.3px;font-size:13px;line-height:16px;color:#4d4d4d;font-weight:400;">Záloha</div>
<div class="r" style="left:1267.4px;top:260.1px;width:271.2px;height:22.9px;box-sizing:border-box;background:#fff;border:1px solid #cbd5dd;border-bottom-color:#a9b7c2;border-radius:5px;box-shadow:0 1px 1px rgba(0,0,0,0.08)"></div>
<div class="r" style="left:1519.8px;top:261.1px;width:18.8px;height:20.9px;background:#eef1f4;border-left:1px solid #dce3e9;box-sizing:border-box;border-radius:0 4px 4px 0;"></div>
<svg class="r" style="left:1524.2px;top:267.2px" width="10.0" height="7.0" viewBox="0 0 10 7"><path d="M0 0L2.8 0 5 2 7.2 0 10 0 5 7z" fill="#1d8fe0"/></svg>
<div class="t" style="left:1270.4px;top:264.1px;font-size:13px;line-height:16px;color:#3c3c3c;font-weight:400;overflow:hidden;max-width:248.4px">PRODEJ Prodejní ceník [CZK]</div>
<div class="r" style="left:1548.2px;top:260.1px;width:132.8px;height:22.9px;box-sizing:border-box;background:#fff;border:1px solid #cbd5dd;border-bottom-color:#a9b7c2;border-radius:5px;box-shadow:0 1px 1px rgba(0,0,0,0.08)"></div>
<div class="r" style="left:1690.4px;top:260.1px;width:132.9px;height:22.9px;box-sizing:border-box;background:#fff;border:1px solid #cbd5dd;border-bottom-color:#a9b7c2;border-radius:5px;box-shadow:0 1px 1px rgba(0,0,0,0.08)"></div>
<div class="t" style="left:50.7px;top:328.8px;font-size:13px;line-height:16px;color:#4d4d4d;font-weight:400;">Popis:</div>
<div class="r" style="left:164.7px;top:326.5px;width:1534.3px;height:23.0px;box-sizing:border-box;background:#fff;border:1px solid #cbd5dd;border-bottom-color:#a9b7c2;border-radius:5px;box-shadow:0 1px 1px rgba(0,0,0,0.08)"></div>
<svg class="r" style="left:1680.0px;top:332.0px" width="16.0" height="13.6" viewBox="0 0 16 14"><rect x="0.5" y="0.5" width="15" height="13" fill="#eef2f8" stroke="#7e9bc8"/><rect x="0.5" y="0.5" width="15" height="3" fill="#5f86c8"/><path d="M3 6.5h10M3 9h10M3 11.5h10" stroke="#b8c6da"/></svg>
<div class="r" style="left:1719.5px;top:328px;width:13.5px;height:13px;box-sizing:border-box;border:1px solid #555;border-radius:3px;background:#fff"></div>
<div class="t" style="left:1738.0px;top:327.0px;font-size:14.45px;line-height:18px;color:#4d4d4d;font-weight:400;">Důležitý doklad</div>
<div class="r" style="left:34.0px;top:357.0px;width:1502.0px;height:32.0px;background:#f7fafd"></div>
<svg class="r" style="left:42.3px;top:365.0px" width="16" height="16" viewBox="0 0 16 16"><circle cx="8" cy="8" r="7.3" fill="#5db854"/><ellipse cx="8" cy="5.5" rx="5" ry="3.8" fill="#fff" opacity="0.16"/><path d="M4 8h8M8 4v8" stroke="#fff" stroke-width="2.2"/></svg>
<div class="t" style="left:61.7px;top:365.0px;font-size:13.03px;line-height:16px;color:#444;font-weight:400;">Produktový</div>
<svg class="r" style="left:136.0px;top:365.0px" width="16" height="16" viewBox="0 0 16 16"><circle cx="8" cy="8" r="7.2" fill="#e8effa" stroke="#a8c0e8"/><path d="M4.5 8h7M8 4.5v7" stroke="#3d7ad8" stroke-width="1.8"/></svg>
<div class="t" style="left:155.0px;top:364.5px;font-size:13.37px;line-height:17px;color:#444;font-weight:400;">Manuální</div>
<svg class="r" style="left:218.0px;top:366.0px" width="18" height="16" viewBox="0 0 18 16"><rect x="0.5" y="2.5" width="16" height="8" fill="#fafafa" stroke="#c0c0c0"/><circle cx="13.5" cy="12" r="3.5" fill="#4cae3c"/></svg>
<div class="t" style="left:238.7px;top:365.5px;font-size:12.24px;line-height:15px;color:#444;font-weight:400;">Text</div>
<svg class="r" style="left:272.0px;top:365.0px" width="17" height="17" viewBox="0 0 17 17"><path d="M1 2h12v8H6l-3 3v-3H1z" fill="#eaf2fb" stroke="#5a8ad0"/><circle cx="13" cy="13" r="3.5" fill="#4cae3c"/></svg>
<div class="t" style="left:290.0px;top:364.5px;font-size:13.3px;line-height:17px;color:#444;font-weight:400;">Interní text</div>
<svg class="r" style="left:362.0px;top:365.5px" width="15" height="15" viewBox="0 0 16 16"><circle cx="8" cy="8" r="7.3" fill="#e0483e"/><ellipse cx="8" cy="5.5" rx="5" ry="3.8" fill="#fff" opacity="0.16"/><path d="M4 8h8" stroke="#fff" stroke-width="2.2"/></svg>
<div class="t" style="left:380.5px;top:365.0px;font-size:13.18px;line-height:16px;color:#444;font-weight:400;">Smazat označené</div>
<svg class="r" style="left:495.5px;top:364.0px" width="17" height="18" viewBox="0 0 17 18"><path d="M1.5 1h9l4 4v12h-13z" fill="#eaf2fb" stroke="#5a8ad0"/><circle cx="13" cy="14" r="3.5" fill="#4cae3c"/></svg>
<div class="t" style="left:515.0px;top:365.0px;font-size:12.95px;line-height:16px;color:#444;font-weight:400;">Vložit řádky z</div>
<svg class="r" style="left:593.0px;top:373.0px" width="6" height="4" viewBox="0 0 6 4"><path d="M0 0h6L3 4z" fill="#222"/></svg>
<div class="t" style="right:388.0px;top:366.0px;font-size:12.8px;line-height:16px;color:#444;font-weight:400;">Počet řádků: 3&nbsp; /&nbsp; 4 KS</div>
<div class="r" style="left:1504.0px;top:366.0px;width:1.0px;height:14.0px;background:#a9c8ec"></div>
<svg class="r" style="left:1513.8px;top:364.0px" width="17" height="18" viewBox="0 0 17 18"><path d="M1 3l5-2 8 3v8l-6 2-7-3z" fill="#5a86d0"/><path d="M9 8l6 6-3 .5 1.5 3-1.5.5-1.5-3-2 2z" fill="#ddd" stroke="#999" stroke-width="0.6"/></svg>
<div class="r" style="left:34.0px;top:389.0px;width:1502.0px;height:27.0px;background:#f5f7f8;border-bottom:1px solid #d9d6e3;box-sizing:border-box"></div>
<div class="r" style="left:34.0px;top:389.0px;width:1247.0px;height:27.0px;background:#f7fafd;border-bottom:1px solid #d9d6e3;box-sizing:border-box"></div>
<div class="r" style="left:1144.5px;top:390.5px;width:136.5px;height:24.5px;background:#e3f1fb"></div>
<div class="r" style="left:138.5px;top:391.0px;width:1.0px;height:24.0px;background:#dde3e8"></div>
<div class="r" style="left:239.0px;top:391.0px;width:1.0px;height:24.0px;background:#dde3e8"></div>
<div class="r" style="left:323.0px;top:391.0px;width:1.0px;height:24.0px;background:#dde3e8"></div>
<div class="r" style="left:663.7px;top:391.0px;width:1.0px;height:24.0px;background:#dde3e8"></div>
<div class="r" style="left:766.5px;top:391.0px;width:1.0px;height:24.0px;background:#dde3e8"></div>
<div class="r" style="left:868.9px;top:391.0px;width:1.0px;height:24.0px;background:#dde3e8"></div>
<div class="r" style="left:1006.7px;top:391.0px;width:1.0px;height:24.0px;background:#dde3e8"></div>
<div class="r" style="left:1143.5px;top:391.0px;width:1.0px;height:24.0px;background:#dde3e8"></div>
<div class="t" style="left:43.0px;top:394.0px;font-size:13px;line-height:16px;color:#444;font-weight:400;">Typ</div>
<div class="t" style="left:145.7px;top:394.0px;font-size:13px;line-height:16px;color:#444;font-weight:400;">Produkt</div>
<div class="t" style="left:245.9px;top:394.0px;font-size:13px;line-height:16px;color:#444;font-weight:400;">Kód</div>
<div class="t" style="left:330.4px;top:394.0px;font-size:13px;line-height:16px;color:#444;font-weight:400;">Popis</div>
<div class="t" style="right:1137.8px;top:394.0px;font-size:12.8px;line-height:16px;color:#444;font-weight:400;">Množství</div>
<div class="t" style="left:773.4px;top:394.0px;font-size:12.8px;line-height:16px;color:#444;font-weight:400;">MJ</div>
<div class="t" style="right:898.2px;top:394.0px;font-size:12.8px;line-height:16px;color:#444;font-weight:400;">Cena/MJ</div>
<div class="t" style="left:1013.0px;top:394.0px;font-size:13px;line-height:16px;color:#444;font-weight:400;">Sleva (-)/Přirážk...</div>
<div class="t" style="left:1150.4px;top:394.5px;font-size:12px;line-height:15px;color:#444;font-weight:400;">Kód DPH</div>
<svg class="r" style="left:1204.0px;top:399.5px" width="8" height="5.5" viewBox="0 0 8 5.5"><path d="M0 5.5L4 0 8 5.5z" fill="#5a8ed8"/></svg>
<div class="r" style="left:34.0px;top:416.0px;width:1502.0px;height:515.0px;background:#fff;border-left:1px solid #e3e8ec;border-bottom:1px solid #dfe5ea;border-radius:0 0 0 8px;box-sizing:border-box"></div>
<div class="r" style="left:34.0px;top:416.0px;width:1247.0px;height:23.0px;background:#fdebdc;outline:1px dotted #2aa0d8;outline-offset:-1px"></div>
<div class="r" style="left:34.0px;top:439.0px;width:1247.0px;height:22.5px;background:#f3f8fd;border-bottom:1px solid #ebeff3;box-sizing:border-box"></div>
<div class="r" style="left:34.0px;top:461.5px;width:1247.0px;height:22.5px;background:#fff;border-bottom:1px solid #ebeff3;box-sizing:border-box"></div>
<div class="r" style="left:1280.0px;top:439.0px;width:1.0px;height:45.0px;background:#ebeff3"></div>
<div class="t" style="left:43.0px;top:419.0px;font-size:13.3px;line-height:17px;color:#333;font-weight:400;">pro</div>
<div class="t" style="left:145.7px;top:419.0px;font-size:13.3px;line-height:17px;color:#333;font-weight:400;">BRP</div>
<div class="t" style="left:245.9px;top:419.0px;font-size:13.3px;line-height:17px;color:#2a2a7a;font-weight:400;text-decoration:underline">BRP</div>
<div class="t" style="left:330.4px;top:419.0px;font-size:13.58px;line-height:17px;color:#333;font-weight:400;">Barelová pumpa ruční</div>
<div class="t" style="right:1124.0px;top:419.0px;font-size:13.3px;line-height:17px;color:#333;font-weight:400;">1,00</div>
<div class="t" style="left:773.4px;top:419.0px;font-size:13.3px;line-height:17px;color:#333;font-weight:400;">KS</div>
<div class="t" style="right:884.0px;top:419.0px;font-size:13.3px;line-height:17px;color:#333;font-weight:400;">2 000,00</div>
<div class="t" style="left:1150.4px;top:419.0px;font-size:13.3px;line-height:17px;color:#333;font-weight:400;">P21</div>
<div class="t" style="left:43.0px;top:441.5px;font-size:13.3px;line-height:17px;color:#333;font-weight:400;">pro</div>
<div class="t" style="left:145.7px;top:441.5px;font-size:13.3px;line-height:17px;color:#333;font-weight:400;">DK2D108D</div>
<div class="t" style="left:245.9px;top:441.5px;font-size:13.3px;line-height:17px;color:#2a2a7a;font-weight:400;text-decoration:underline">DK2D108D</div>
<div class="t" style="left:330.4px;top:441.5px;font-size:13.25px;line-height:17px;color:#333;font-weight:400;">Stolní výdejník barelové vody s digitálním displejem bí...</div>
<div class="t" style="right:1124.0px;top:441.5px;font-size:13.3px;line-height:17px;color:#333;font-weight:400;">1,00</div>
<div class="t" style="left:773.4px;top:441.5px;font-size:13.3px;line-height:17px;color:#333;font-weight:400;">KS</div>
<div class="t" style="right:884.0px;top:441.5px;font-size:13.3px;line-height:17px;color:#333;font-weight:400;">1 000,00</div>
<div class="t" style="right:746.6px;top:441.5px;font-size:13.3px;line-height:17px;color:#333;font-weight:400;">-5,00</div>
<div class="t" style="left:1150.4px;top:441.5px;font-size:13.3px;line-height:17px;color:#333;font-weight:400;">P21</div>
<div class="t" style="left:43.0px;top:464.0px;font-size:13.3px;line-height:17px;color:#333;font-weight:400;">pro</div>
<div class="t" style="left:145.7px;top:464.0px;font-size:13.3px;line-height:17px;color:#333;font-weight:400;">KAN-20</div>
<div class="t" style="left:245.9px;top:464.0px;font-size:13.3px;line-height:17px;color:#2a2a7a;font-weight:400;text-decoration:underline">KAN-20</div>
<div class="t" style="left:330.4px;top:464.0px;font-size:13.3px;line-height:17px;color:#333;font-weight:400;">Kanystr 20 l s kohoutkem</div>
<div class="t" style="right:1124.0px;top:464.0px;font-size:13.3px;line-height:17px;color:#333;font-weight:400;">2,00</div>
<div class="t" style="left:773.4px;top:464.0px;font-size:13.3px;line-height:17px;color:#333;font-weight:400;">KS</div>
<div class="t" style="right:884.0px;top:464.0px;font-size:13.3px;line-height:17px;color:#333;font-weight:400;">300,00</div>
<div class="t" style="left:1150.4px;top:464.0px;font-size:13.3px;line-height:17px;color:#333;font-weight:400;">P21</div>
<div class="r" style="left:34.0px;top:931.0px;width:1502.0px;height:46.0px;background:#f7fafd;border-left:1px solid #e3e8ec;border-bottom:1px solid #dfe5ea;border-radius:0 0 0 8px;box-sizing:border-box"></div>
<div class="t" style="left:83.8px;top:949.0px;font-size:12.4px;line-height:16px;color:#444;font-weight:400;">Bez DPH:</div>
<div class="r" style="left:197.2px;top:946.0px;width:402.8px;height:23.0px;background:#eef0f3;border:1px solid #cfd6dc;border-radius:5px;box-sizing:border-box"></div>
<div class="r" style="left:1536.0px;top:357.0px;width:6.0px;height:620.0px;background:#eceef1"></div>
<div class="r" style="left:1542.0px;top:357.0px;width:312.0px;height:620.0px;background:#f7fafd"></div>
<div class="r" style="left:1542.0px;top:357.0px;width:312.0px;height:24.6px;background:#eef0f3"></div>
<div class="t" style="left:1547.0px;top:359.3px;font-size:13.5px;line-height:17px;color:#222;font-weight:700;">Produkt</div>
<svg class="r" style="left:1838px;top:365px" width="11" height="10" viewBox="0 0 11 10"><path d="M1 1l4 4-4 4M6 1l4 4-4 4" stroke="#3d9ae8" stroke-width="1.6" fill="none"/></svg>
<div class="t" style="left:1551.7px;top:388.0px;font-size:13px;line-height:16px;color:#4d4d4d;font-weight:400;">Produkt</div>
<div class="r" style="left:1551.7px;top:403.8px;width:267.9px;height:22.3px;box-sizing:border-box;background:#fff;border:1px solid #cbd5dd;border-bottom-color:#a9b7c2;border-radius:5px;box-shadow:0 1px 1px rgba(0,0,0,0.08)"></div>
<div class="r" style="left:1801.3px;top:404.8px;width:18.3px;height:20.3px;background:#eef1f4;border-left:1px solid #dce3e9;box-sizing:border-box;border-radius:0 4px 4px 0;"></div>
<svg class="r" style="left:1805.5px;top:410.7px" width="10.0" height="7.0" viewBox="0 0 10 7"><path d="M0 0L2.8 0 5 2 7.2 0 10 0 5 7z" fill="#1d8fe0"/></svg>
<div class="r" style="left:1783.0px;top:404.8px;width:18.3px;height:20.3px;background:#eef1f4;border-left:1px solid #dce3e9;box-sizing:border-box;"></div>
<svg class="r" style="left:1785.7px;top:408.5px" width="13.0" height="13.0" viewBox="0 0 13 13"><circle cx="5.3" cy="5.3" r="4.1" stroke="#18a2de" stroke-width="1.8" fill="none"/><path d="M8.2 8.2l3.8 3.8" stroke="#18a2de" stroke-width="2"/></svg>
<div class="r" style="left:1764.7px;top:404.8px;width:18.3px;height:20.3px;background:#eef1f4;border-left:1px solid #dce3e9;box-sizing:border-box;"></div>
<svg class="r" style="left:1768.9px;top:410.0px" width="10.0" height="10.0" viewBox="0 0 10 10"><path d="M5 0.5v9M0.5 5h9" stroke="#2fbf45" stroke-width="1.6"/></svg>
<div class="t" style="left:1554.7px;top:407.5px;font-size:13px;line-height:16px;color:#3c3c3c;font-weight:400;overflow:hidden;max-width:209.0px">BRP Barelová pumpa ruční</div>
<div class="t" style="left:1551.7px;top:429.6px;font-size:13px;line-height:16px;color:#4d4d4d;font-weight:400;">Kód</div>
<div class="r" style="left:1551.7px;top:445.7px;width:267.9px;height:22.3px;box-sizing:border-box;background:#fff;border:1px solid #cbd5dd;border-bottom-color:#a9b7c2;border-radius:5px;box-shadow:0 1px 1px rgba(0,0,0,0.08)"></div>
<div class="t" style="left:1554.7px;top:449.4px;font-size:13px;line-height:16px;color:#3c3c3c;font-weight:400;overflow:hidden;max-width:263.9px">BRP</div>
<div class="t" style="left:1551.7px;top:470.3px;font-size:13px;line-height:16px;color:#4d4d4d;font-weight:400;">Popis</div>
<div class="r" style="left:1551.7px;top:487.4px;width:267.9px;height:22.6px;box-sizing:border-box;background:#fff;border:1px solid #cbd5dd;border-bottom-color:#a9b7c2;border-radius:5px;box-shadow:0 1px 1px rgba(0,0,0,0.08)"></div>
<div class="t" style="left:1554.7px;top:491.2px;font-size:13px;line-height:16px;color:#3c3c3c;font-weight:400;overflow:hidden;max-width:263.9px">Barelová pumpa ruční</div>
<svg class="r" style="left:1801.5px;top:493.0px" width="16.0" height="13.6" viewBox="0 0 16 14"><rect x="0.5" y="0.5" width="15" height="13" fill="#eef2f8" stroke="#7e9bc8"/><rect x="0.5" y="0.5" width="15" height="3" fill="#5f86c8"/><path d="M3 6.5h10M3 9h10M3 11.5h10" stroke="#b8c6da"/></svg>
<div class="t" style="left:1551.7px;top:512.0px;font-size:13px;line-height:16px;color:#4d4d4d;font-weight:400;">Text</div>
<div class="r" style="left:1551.7px;top:528.7px;width:264.8px;height:90.1px;box-sizing:border-box;background:#fff;border:1px solid #cbd5dd;border-bottom-color:#a9b7c2;border-radius:5px;box-shadow:0 1px 1px rgba(0,0,0,0.08)"></div>
<div class="r" style="left:1800.3px;top:530.0px;width:15.2px;height:87.8px;background:#f1f1f1;border-left:1px solid #e6e6e6;box-sizing:border-box"></div>
<div class="r" style="left:1802.0px;top:545.8px;width:12.0px;height:31.0px;background:#c1c1c1"></div>
<svg class="r" style="left:1804.0px;top:533.0px" width="8" height="5" viewBox="0 0 8 5"><path d="M0 5L4 0 8 5z" fill="#a3a3a3"/></svg>
<svg class="r" style="left:1804.0px;top:607.0px" width="8" height="5" viewBox="0 0 8 5"><path d="M0 0L4 5 8 0z" fill="#505050"/></svg>
<div class="t" style="left:1555.7px;top:530.1px;font-size:13.62px;line-height:17px;color:#333;font-weight:400;">Ruční pumpa pro mechanické</div>
<div class="t" style="left:1555.7px;top:548.1px;font-size:13.3px;line-height:17px;color:#333;font-weight:400;">dávkování vody z pitných barelů.</div>
<div class="t" style="left:1555.7px;top:566.1px;font-size:13.31px;line-height:17px;color:#333;font-weight:400;">Snadné a praktické použití bez elektřiny</div>
<div class="t" style="left:1555.7px;top:584.1px;font-size:13.3px;line-height:17px;color:#333;font-weight:400;">či baterií, nenáročná údržba,</div>
<div class="t" style="left:1555.7px;top:602.1px;font-size:13.3px;line-height:17px;color:#333;font-weight:400;">jednoduchá výměna vypitých barelů</div>
<svg class="r" style="left:1777.5px;top:602.0px" width="16.0" height="13.6" viewBox="0 0 16 14"><rect x="0.5" y="0.5" width="15" height="13" fill="#eef2f8" stroke="#7e9bc8"/><rect x="0.5" y="0.5" width="15" height="3" fill="#5f86c8"/><path d="M3 6.5h10M3 9h10M3 11.5h10" stroke="#b8c6da"/></svg>
<div class="t" style="left:1551.7px;top:623.2px;font-size:13px;line-height:16px;color:#4d4d4d;font-weight:400;">Množství</div>
<div class="t" style="left:1691.0px;top:623.2px;font-size:13px;line-height:16px;color:#4d4d4d;font-weight:400;">MJ</div>
<div class="r" style="left:1551.7px;top:639.4px;width:129.3px;height:22.1px;box-sizing:border-box;background:#fff;border:1px solid #cbd5dd;border-bottom-color:#a9b7c2;border-radius:5px;box-shadow:0 1px 1px rgba(0,0,0,0.08)"></div>
<div class="t" style="right:206.0px;top:643.0px;font-size:13px;line-height:16px;color:#3c3c3c;font-weight:400;">1,00</div>
<div class="r" style="left:1691.0px;top:639.4px;width:125.4px;height:22.1px;box-sizing:border-box;background:#fff;border:1px solid #cbd5dd;border-bottom-color:#a9b7c2;border-radius:5px;box-shadow:0 1px 1px rgba(0,0,0,0.08)"></div>
<div class="r" style="left:1798.4px;top:640.4px;width:18.0px;height:20.1px;background:#eef1f4;border-left:1px solid #dce3e9;box-sizing:border-box;border-radius:0 4px 4px 0;"></div>
<svg class="r" style="left:1802.4px;top:646.2px" width="10.0" height="7.0" viewBox="0 0 10 7"><path d="M0 0L2.8 0 5 2 7.2 0 10 0 5 7z" fill="#1d8fe0"/></svg>
<div class="t" style="left:1694.0px;top:643.0px;font-size:13px;line-height:16px;color:#3c3c3c;font-weight:400;overflow:hidden;max-width:103.4px">KS</div>
<div class="t" style="left:1551.7px;top:664.5px;font-size:13px;line-height:16px;color:#4d4d4d;font-weight:400;">Cena/MJ</div>
<div class="t" style="left:1691.0px;top:664.5px;font-size:13px;line-height:16px;color:#4d4d4d;font-weight:400;">Kód DPH</div>
<div class="r" style="left:1551.7px;top:681.0px;width:129.3px;height:21.8px;box-sizing:border-box;background:#fff;border:1px solid #cbd5dd;border-bottom-color:#a9b7c2;border-radius:5px;box-shadow:0 1px 1px rgba(0,0,0,0.08)"></div>
<div class="t" style="right:206.0px;top:684.4px;font-size:13px;line-height:16px;color:#3c3c3c;font-weight:400;">2 000,00</div>
<div class="r" style="left:1691.0px;top:681.0px;width:128.2px;height:21.8px;box-sizing:border-box;background:#fff;border:1px solid #cbd5dd;border-bottom-color:#a9b7c2;border-radius:5px;box-shadow:0 1px 1px rgba(0,0,0,0.08)"></div>
<div class="r" style="left:1801.2px;top:682.0px;width:18.0px;height:19.8px;background:#eef1f4;border-left:1px solid #dce3e9;box-sizing:border-box;border-radius:0 4px 4px 0;"></div>
<svg class="r" style="left:1805.2px;top:687.6px" width="10.0" height="7.0" viewBox="0 0 10 7"><path d="M0 0L2.8 0 5 2 7.2 0 10 0 5 7z" fill="#1d8fe0"/></svg>
<div class="t" style="left:1694.0px;top:684.4px;font-size:13px;line-height:16px;color:#3c3c3c;font-weight:400;overflow:hidden;max-width:106.2px">P21</div>
<div class="t" style="left:1551.7px;top:705.7px;font-size:13px;line-height:16px;color:#4d4d4d;font-weight:400;">Sleva (-)/Přirážka (+)</div>
<div class="t" style="left:1691.0px;top:705.7px;font-size:13px;line-height:16px;color:#4d4d4d;font-weight:400;">Typ slevy/přirážky</div>
<div class="r" style="left:1551.7px;top:722.5px;width:129.3px;height:21.5px;box-sizing:border-box;background:#fff;border:1px solid #cbd5dd;border-bottom-color:#a9b7c2;border-radius:5px;box-shadow:0 1px 1px rgba(0,0,0,0.08)"></div>
<div class="r" style="left:1691.0px;top:722.5px;width:128.2px;height:21.5px;box-sizing:border-box;background:#fff;border:1px solid #cbd5dd;border-bottom-color:#a9b7c2;border-radius:5px;box-shadow:0 1px 1px rgba(0,0,0,0.08)"></div>
<div class="r" style="left:1801.2px;top:723.5px;width:18.0px;height:19.5px;background:#eef1f4;border-left:1px solid #dce3e9;box-sizing:border-box;border-radius:0 4px 4px 0;"></div>
<svg class="r" style="left:1805.2px;top:729.0px" width="10.0" height="7.0" viewBox="0 0 10 7"><path d="M0 0L2.8 0 5 2 7.2 0 10 0 5 7z" fill="#1d8fe0"/></svg>
<div class="r" style="left:1783.2px;top:723.5px;width:18.0px;height:19.5px;background:#eef1f4;border-left:1px solid #dce3e9;box-sizing:border-box;"></div>
<svg class="r" style="left:1787.7px;top:728.8px" width="9.0" height="9.0" viewBox="0 0 10 10"><path d="M1 1l8 8M9 1l-8 8" stroke="#f0561e" stroke-width="2"/></svg>
<div class="t" style="left:1551.7px;top:747.9px;font-size:13px;line-height:16px;color:#4d4d4d;font-weight:400;">Účet</div>
<div class="r" style="left:1551.7px;top:764.3px;width:262.3px;height:21.9px;box-sizing:border-box;background:#fff;border:1px solid #cbd5dd;border-bottom-color:#a9b7c2;border-radius:5px;box-shadow:0 1px 1px rgba(0,0,0,0.08)"></div>
<div class="r" style="left:1795.7px;top:765.3px;width:18.3px;height:19.9px;background:#eef1f4;border-left:1px solid #dce3e9;box-sizing:border-box;border-radius:0 4px 4px 0;"></div>
<svg class="r" style="left:1799.9px;top:771.0px" width="10.0" height="7.0" viewBox="0 0 10 7"><path d="M0 0L2.8 0 5 2 7.2 0 10 0 5 7z" fill="#1d8fe0"/></svg>
<div class="r" style="left:1777.4px;top:765.3px;width:18.3px;height:19.9px;background:#eef1f4;border-left:1px solid #dce3e9;box-sizing:border-box;"></div>
<svg class="r" style="left:1780.1px;top:768.8px" width="13.0" height="13.0" viewBox="0 0 13 13"><circle cx="5.3" cy="5.3" r="4.1" stroke="#18a2de" stroke-width="1.8" fill="none"/><path d="M8.2 8.2l3.8 3.8" stroke="#18a2de" stroke-width="2"/></svg>
<div class="r" style="left:1759.1px;top:765.3px;width:18.3px;height:19.9px;background:#eef1f4;border-left:1px solid #dce3e9;box-sizing:border-box;"></div>
<svg class="r" style="left:1763.3px;top:770.2px" width="10.0" height="10.0" viewBox="0 0 10 10"><path d="M5 0.5v9M0.5 5h9" stroke="#2fbf45" stroke-width="1.6"/></svg>
<div class="t" style="left:1554.7px;top:767.8px;font-size:13px;line-height:16px;color:#3c3c3c;font-weight:400;overflow:hidden;max-width:203.4px">60401 Tržby za zboží</div>
<div class="t" style="left:1551.7px;top:788.5px;font-size:13px;line-height:16px;color:#4d4d4d;font-weight:400;">Část dokladu</div>
<div class="r" style="left:1551.7px;top:805.9px;width:267.5px;height:21.9px;box-sizing:border-box;background:#fff;border:1px solid #cbd5dd;border-bottom-color:#a9b7c2;border-radius:5px;box-shadow:0 1px 1px rgba(0,0,0,0.08)"></div>
<div class="r" style="left:1801.2px;top:806.9px;width:18.0px;height:19.9px;background:#eef1f4;border-left:1px solid #dce3e9;box-sizing:border-box;border-radius:0 4px 4px 0;"></div>
<svg class="r" style="left:1805.2px;top:812.5px" width="10.0" height="7.0" viewBox="0 0 10 7"><path d="M0 0L2.8 0 5 2 7.2 0 10 0 5 7z" fill="#1d8fe0"/></svg>
<svg class="r" style="left:1783.0px;top:810.0px" width="16.0" height="13.6" viewBox="0 0 16 14"><rect x="0.5" y="0.5" width="15" height="13" fill="#eef2f8" stroke="#7e9bc8"/><rect x="0.5" y="0.5" width="15" height="3" fill="#5f86c8"/><path d="M3 6.5h10M3 9h10M3 11.5h10" stroke="#b8c6da"/></svg>
<div class="t" style="left:1551.7px;top:830.0px;font-size:13px;line-height:16px;color:#4d4d4d;font-weight:400;">Obrázek produktu</div>
<div class="r" style="left:1551.7px;top:847.2px;width:267.5px;height:22.2px;box-sizing:border-box;background:#fff;border:1px solid #cbd5dd;border-bottom-color:#a9b7c2;border-radius:5px;box-shadow:0 1px 1px rgba(0,0,0,0.08)"></div>
<div class="r" style="left:1800.9px;top:848.2px;width:18.3px;height:20.2px;background:#eef1f4;border-left:1px solid #dce3e9;box-sizing:border-box;border-radius:0 4px 4px 0;"></div>
<svg class="r" style="left:1805.1px;top:854.0px" width="10.0" height="7.0" viewBox="0 0 10 7"><path d="M0 0L2.8 0 5 2 7.2 0 10 0 5 7z" fill="#1d8fe0"/></svg>
<div class="r" style="left:1782.6px;top:848.2px;width:18.3px;height:20.2px;background:#eef1f4;border-left:1px solid #dce3e9;box-sizing:border-box;"></div>
<svg class="r" style="left:1787.3px;top:853.8px" width="9.0" height="9.0" viewBox="0 0 10 10"><path d="M1 1l8 8M9 1l-8 8" stroke="#f0561e" stroke-width="2"/></svg>
<div class="r" style="left:1764.3px;top:848.2px;width:18.3px;height:20.2px;background:#eef1f4;border-left:1px solid #dce3e9;box-sizing:border-box;"></div>
<svg class="r" style="left:1768.5px;top:857.3px" width="10" height="3" viewBox="0 0 10 3"><path d="M0 1.5h2M4 1.5h2M8 1.5h2" stroke="#1d9ee0" stroke-width="2"/></svg>
<div class="r" style="left:1746.0px;top:848.2px;width:18.3px;height:20.2px;background:#eef1f4;border-left:1px solid #dce3e9;box-sizing:border-box;"></div>
<svg class="r" style="left:1748.7px;top:851.8px" width="13.0" height="13.0" viewBox="0 0 13 13"><path d="M6.5 12.5v-11M2 5.5l4.5-4.5 4.5 4.5" stroke="#1d9ee0" stroke-width="1.5" fill="none"/></svg>
<div class="r" style="left:1543.7px;top:881px;width:1287px;height:10px"></div>
<div class="r" style="left:1543.7px;top:880.5px;width:287.3px;height:10.5px;border:1px solid #dfe5ea;border-bottom-color:#d0d8de;border-radius:0 0 8px 8px;border-top:1px solid #dfe5ea;box-sizing:border-box;background:#fff;box-shadow:0 1px 2px rgba(0,0,0,0.08)"></div>
<div class="r" style="left:1555.0px;top:876.0px;width:88.0px;height:10.0px;background:#f7fafd"></div>
<svg class="r" style="left:1557.0px;top:877.5px" width="9" height="7" viewBox="0 0 9 7"><path d="M0 0L4.5 7 9 0z" fill="#2196e8"/></svg>
<div class="t" style="left:1572.8px;top:872.9px;font-size:12.62px;line-height:16px;color:#222;font-weight:700;">Interní info</div>
<div class="r" style="left:1542.0px;top:936.0px;width:312.0px;height:40.0px;background:#f7fafd"></div>
<div class="r" style="left:1543.6px;top:974.0px;width:310.4px;height:1.0px;background:#e3e8ec"></div>
<svg class="r" style="left:1550.0px;top:951.0px" width="16" height="16" viewBox="0 0 16 16"><circle cx="8" cy="8" r="7.3" fill="#5cbf5a"/><ellipse cx="8" cy="5.5" rx="5" ry="3.8" fill="#fff" opacity="0.16"/><path d="M4.3 8.3l2.5 2.5 5-5" stroke="#fff" stroke-width="2" fill="none"/></svg>
<div class="t" style="left:1568.7px;top:951.5px;font-size:12.24px;line-height:15px;color:#444;font-weight:400;">OK</div>
<svg class="r" style="left:1593.7px;top:951.0px" width="16" height="16" viewBox="0 0 16 16"><circle cx="8" cy="8" r="7.3" fill="#e53a3a"/><ellipse cx="8" cy="5.5" rx="5" ry="3.8" fill="#fff" opacity="0.16"/><path d="M5 5l6 6M11 5l-6 6" stroke="#fff" stroke-width="2.2"/></svg>
<div class="t" style="left:1613.0px;top:951.0px;font-size:12.56px;line-height:16px;color:#444;font-weight:400;">Zrušit</div>
<svg class="r" style="left:1654.0px;top:950.0px" width="17" height="18" viewBox="0 0 17 18"><rect x="1" y="1" width="12" height="15" rx="1" fill="#c8ccd0" stroke="#888"/><rect x="3" y="3" width="8" height="3" fill="#6a90d0"/><rect x="5" y="11" width="11" height="6" rx="2" fill="#666"/></svg>
<div class="t" style="left:1672.8px;top:951.5px;font-size:11.89px;line-height:15px;color:#444;font-weight:400;">S DPH -&gt; bez DPH</div>
<div class="r" style="left:1782.6px;top:952.0px;width:1.0px;height:14.0px;background:#a9c8ec"></div>
<svg class="r" style="left:1793.6px;top:951.0px" width="14" height="16" viewBox="0 0 14 16"><rect x="0.5" y="0.5" width="13" height="15" rx="1" fill="#d8dadc" stroke="#999"/><rect x="2" y="2" width="10" height="3" fill="#6a90d0"/><path d="M2 7h10M2 10h10M2 13h10M5 7v8M9 7v8" stroke="#aaa" stroke-width="0.8"/></svg>
<div class="r" style="left:1817.0px;top:952.0px;width:1.0px;height:14.0px;background:#a9c8ec"></div>
<svg class="r" style="left:1826.5px;top:951.0px" width="16" height="16" viewBox="0 0 16 16"><circle cx="8" cy="8" r="7.3" fill="#6d95cc"/><ellipse cx="8" cy="5.5" rx="5" ry="3.8" fill="#fff" opacity="0.16"/><circle cx="8" cy="8" r="7.3" fill="none" stroke="#4a70b0" stroke-width="0.8"/><circle cx="8" cy="8" r="5.6" fill="none" stroke="#a8c4e8" stroke-width="0.7"/><path d="M8 7v4.6M6.6 11.6h2.8" stroke="#fff" stroke-width="1.8"/><circle cx="8" cy="4.7" r="1.1" fill="#fff"/></svg>
<svg class="r" style="left:1850.0px;top:959.0px" width="6" height="4" viewBox="0 0 6 4"><path d="M0 0h6L3 4z" fill="#222"/></svg>
<div class="r" style="left:369.0px;top:505.0px;width:1137.0px;height:708.0px;background:#f7fafd"></div>
<div class="r" style="left:369.0px;top:505.0px;width:1137.0px;height:27.0px;background:#eef0f3"></div>
<div class="r" style="left:1508.0px;top:505.0px;width:2.0px;height:707.0px;background:#1ab0e2"></div>
<div class="r" style="left:373.3px;top:511.0px;width:67.4px;height:21.0px;box-sizing:border-box;background:#f5f8fb;border:1px solid #d6dde3;border-bottom:none;border-radius:7px 7px 0 0"></div>
<div class="t" style="left:381.6px;top:515.0px;font-size:10.22px;line-height:13px;color:#444;font-weight:400;">Dashboard</div>
<div class="r" style="left:442.0px;top:511.0px;width:58.6px;height:21.0px;box-sizing:border-box;background:#f5f8fb;border:1px solid #d6dde3;border-bottom:none;border-radius:7px 7px 0 0"></div>
<div class="t" style="left:451.6px;top:515.0px;font-size:10.12px;line-height:13px;color:#444;font-weight:400;">Jak na to</div>
<div class="r" style="left:503.8px;top:511.0px;width:81.4px;height:21.0px;box-sizing:border-box;background:#f5f8fb;border:1px solid #d6dde3;border-bottom:none;border-radius:7px 7px 0 0"></div>
<svg class="r" style="left:508.0px;top:514.0px" width="14" height="14" viewBox="0 0 18 18"><path d="M3.5 0.8h9l4.2 4.2V16.5H3.5z" fill="#f6f6f6" stroke="#c4c8cc" stroke-width="0.9"/><path d="M1 15.2C3.5 14.8 5 12 6 9.5S8 3.8 11 3.3M5.6 10.3h3.4" stroke="#ee3a40" stroke-width="2.3" fill="none" stroke-linecap="round"/></svg>
<div class="t" style="left:525.4px;top:515.0px;font-size:10.03px;line-height:13px;color:#444;font-weight:400;">Fakturace</div>
<svg class="r" style="left:575.9px;top:513.0px" width="6" height="6" viewBox="0 0 8 8"><path d="M1 1l6 6M7 1l-6 6" stroke="#6ab8ec" stroke-width="1.5"/></svg>
<div class="r" style="left:588.4px;top:511.0px;width:85.0px;height:21.0px;box-sizing:border-box;background:#f5f8fb;border:1px solid #d6dde3;border-bottom:none;border-radius:7px 7px 0 0"></div>
<svg class="r" style="left:592.0px;top:514.0px" width="14" height="14" viewBox="0 0 18 18"><path d="M3.5 0.8h9l4.2 4.2V16.5H3.5z" fill="#f6f6f6" stroke="#c4c8cc" stroke-width="0.9"/><path d="M1 15.2C3.5 14.8 5 12 6 9.5S8 3.8 11 3.3M5.6 10.3h3.4" stroke="#ee3a40" stroke-width="2.3" fill="none" stroke-linecap="round"/></svg>
<div class="t" style="left:609.7px;top:515.5px;font-size:9.45px;line-height:12px;color:#444;font-weight:400;">FA: 240008</div>
<svg class="r" style="left:664.0px;top:513.0px" width="6" height="6" viewBox="0 0 8 8"><path d="M1 1l6 6M7 1l-6 6" stroke="#6ab8ec" stroke-width="1.5"/></svg>
<div class="r" style="left:676.5px;top:511.0px;width:76.5px;height:21.0px;box-sizing:border-box;background:#f5f8fb;border:1px solid #d6dde3;border-bottom:none;border-radius:7px 7px 0 0"></div>
<svg class="r" style="left:681.0px;top:515.0px" width="14" height="14" viewBox="0 0 15 14"><rect x="4" y="1" width="7" height="6" fill="#e05050"/><rect x="1" y="6" width="7" height="7" fill="#50a050"/><rect x="7" y="6" width="7" height="7" fill="#5070c0"/></svg>
<div class="t" style="left:697.9px;top:515.5px;font-size:9.92px;line-height:12px;color:#444;font-weight:400;">Produkty</div>
<svg class="r" style="left:743.0px;top:513.0px" width="6" height="6" viewBox="0 0 8 8"><path d="M1 1l6 6M7 1l-6 6" stroke="#6ab8ec" stroke-width="1.5"/></svg>
<div class="r" style="left:756.0px;top:511.0px;width:98.7px;height:21.0px;box-sizing:border-box;background:#fafcfe;border:1px solid #d6dde3;border-bottom:none;border-radius:7px 7px 0 0"></div>
<svg class="r" style="left:760.9px;top:515.0px" width="14" height="14" viewBox="0 0 15 14"><rect x="4" y="1" width="7" height="6" fill="#e05050"/><rect x="1" y="6" width="7" height="7" fill="#50a050"/><rect x="7" y="6" width="7" height="7" fill="#5070c0"/></svg>
<div class="t" style="left:776.8px;top:516.0px;font-size:8.88px;line-height:11px;color:#1f8ee0;font-weight:700;">Produkty: BRP</div>
<svg class="r" style="left:846.0px;top:513.0px" width="6" height="6" viewBox="0 0 8 8"><path d="M1 1l6 6M7 1l-6 6" stroke="#6ab8ec" stroke-width="1.5"/></svg>
<div class="r" style="left:369.0px;top:532.0px;width:1137.0px;height:23.7px;background:#f7fafd;border-bottom:1px solid #e4e9ee;box-sizing:border-box"></div>
<svg class="r" style="left:374.3px;top:537.0px" width="14" height="14" viewBox="0 0 16 16"><rect x="0.6" y="0.6" width="14.8" height="14.8" rx="2" fill="#5d8bd2" stroke="#3b68b3" stroke-width="0.9"/><rect x="3" y="1.2" width="10" height="4.3" fill="#e9f0fa"/><rect x="4" y="1.6" width="1.3" height="2.6" fill="#3b68b3"/><rect x="2.3" y="8.6" width="11.4" height="6.4" fill="#eef3fa"/><rect x="3.3" y="10" width="9.4" height="3.6" fill="#8cc870"/></svg>
<div class="t" style="left:389.3px;top:538.0px;font-size:9.47px;line-height:12px;color:#444;font-weight:400;">Uložit</div>
<div class="r" style="left:419.5px;top:538.5px;width:1.0px;height:11.0px;background:#a9c8ec"></div>
<svg class="r" style="left:425.9px;top:537.0px" width="14" height="14" viewBox="0 0 16 16"><rect x="0.6" y="0.6" width="14.8" height="14.8" rx="2" fill="#5d8bd2" stroke="#3b68b3" stroke-width="0.9"/><rect x="3" y="1.2" width="10" height="4.3" fill="#e9f0fa"/><rect x="4" y="1.6" width="1.3" height="2.6" fill="#3b68b3"/><rect x="2.3" y="8.6" width="11.4" height="6.4" fill="#eef3fa"/><rect x="3.3" y="10" width="9.4" height="3.6" fill="#8cc870"/><circle cx="11.8" cy="11.8" r="4" fill="#4cb04a"/><path d="M9.8 11.8h4M11.8 9.8v4" stroke="#fff" stroke-width="1.4"/></svg>
<div class="t" style="left:440.5px;top:538.0px;font-size:9.91px;line-height:12px;color:#444;font-weight:400;">Uložit+nový</div>
<svg class="r" style="left:498.4px;top:537.0px" width="14" height="14" viewBox="0 0 16 16"><rect x="0.6" y="0.6" width="14.8" height="14.8" rx="2" fill="#5d8bd2" stroke="#3b68b3" stroke-width="0.9"/><rect x="3" y="1.2" width="10" height="4.3" fill="#e9f0fa"/><rect x="4" y="1.6" width="1.3" height="2.6" fill="#3b68b3"/><rect x="2.3" y="8.6" width="11.4" height="6.4" fill="#eef3fa"/><rect x="3.3" y="10" width="9.4" height="3.6" fill="#8cc870"/><rect x="8.5" y="8.5" width="7.2" height="7.2" rx="1.5" fill="#e03030"/><path d="M10.5 10.5l3.2 3.2M13.7 10.5l-3.2 3.2" stroke="#fff" stroke-width="1.3"/></svg>
<div class="t" style="left:513.3px;top:538.0px;font-size:9.68px;line-height:12px;color:#444;font-weight:400;">Uložit+zavřít</div>
<div class="r" style="left:572.5px;top:538.5px;width:1.0px;height:11.0px;background:#a9c8ec"></div>
<svg class="r" style="left:580.5px;top:537.5px" width="13" height="13" viewBox="0 0 16 16"><circle cx="8" cy="8" r="7.3" fill="#e0483e"/><ellipse cx="8" cy="5.5" rx="5" ry="3.8" fill="#fff" opacity="0.16"/><path d="M4 8h8" stroke="#fff" stroke-width="2.2"/></svg>
<div class="t" style="left:594.5px;top:538.0px;font-size:9.94px;line-height:12px;color:#444;font-weight:400;">Smazat</div>
<div class="r" style="left:634.2px;top:538.5px;width:1.0px;height:11.0px;background:#a9c8ec"></div>
<div class="t" style="left:639.3px;top:538.0px;font-size:9.83px;line-height:12px;color:#444;font-weight:400;">Neaktivní:</div>
<div class="r" style="left:700.4px;top:538.0px;width:10.6px;height:10.4px;border:1px solid #555;border-radius:2px;background:#fff;box-sizing:border-box"></div>
<div class="r" style="left:721.7px;top:538.5px;width:1.0px;height:11.0px;background:#a9c8ec"></div>
<svg class="r" style="left:727.5px;top:537.0px" width="14" height="14" viewBox="0 0 14 14"><rect x="0.5" y="1.5" width="12" height="10" fill="#e8eef6" stroke="#6a8ac0"/><rect x="0.5" y="1.5" width="12" height="3" fill="#6a8ac0"/><path d="M2 7h4M2 9h4M8 7h3" stroke="#888" stroke-width="0.8"/><circle cx="12" cy="12" r="2" fill="#d8a040"/></svg>
<div class="t" style="left:743.4px;top:537.5px;font-size:10.1px;line-height:13px;color:#444;font-weight:400;">Skladová karta</div>
<div class="r" style="left:816.5px;top:538.5px;width:1.0px;height:11.0px;background:#a9c8ec"></div>
<svg class="r" style="left:823.0px;top:537.0px" width="14" height="14" viewBox="0 0 14 14"><path d="M1 6V1h5l7 7-5 5z" fill="#dfe8f5" stroke="#9ab0d0"/><circle cx="4" cy="4" r="1" fill="#777"/></svg>
<svg class="r" style="left:843.0px;top:537.5px" width="13" height="13" viewBox="0 0 16 16"><circle cx="8" cy="8" r="7.3" fill="#6d95cc"/><ellipse cx="8" cy="5.5" rx="5" ry="3.8" fill="#fff" opacity="0.16"/><circle cx="8" cy="8" r="7.3" fill="none" stroke="#4a70b0" stroke-width="0.8"/><circle cx="8" cy="8" r="5.6" fill="none" stroke="#a8c4e8" stroke-width="0.7"/><path d="M8 7v4.6M6.6 11.6h2.8" stroke="#fff" stroke-width="1.8"/><circle cx="8" cy="4.7" r="1.1" fill="#fff"/></svg>
<div class="r" style="left:861.7px;top:538.5px;width:1.0px;height:11.0px;background:#a9c8ec"></div>
<svg class="r" style="left:867.4px;top:537.0px" width="15" height="14" viewBox="0 0 15 14"><path d="M1 4h6l4 6h3M1 10h6l4-6h3" stroke="#4a9a3a" stroke-width="2.2" fill="none"/><path d="M12 1l3 3-3 3zM12 7l3 3-3 3z" fill="#4a9a3a"/></svg>
<div class="r" style="left:887.1px;top:538.5px;width:1.0px;height:11.0px;background:#a9c8ec"></div>
<svg class="r" style="left:893.5px;top:537.0px" width="14" height="14" viewBox="0 0 14 14"><path d="M2 1h7l3 3v9H2z" fill="#f4f4f4" stroke="#c8c8c8" stroke-width="0.8"/><path d="M8 1L4 8h3l-2 5 5-7H7z" fill="#f0c020"/></svg>
<svg class="r" style="left:1304.4px;top:537.0px" width="14" height="14" viewBox="0 0 16 16"><rect x="1" y="1" width="10" height="12" fill="#e6eef8" stroke="#7d9ccc"/><path d="M2 4h8M2 7h8M2 10h8" stroke="#9fc06a"/><rect x="7" y="8" width="8" height="8" rx="1" fill="#5b87c9"/><rect x="9" y="12" width="4" height="3" fill="#c9e08a"/></svg>
<svg class="r" style="left:1319.8px;top:543.0px" width="5" height="3.5" viewBox="0 0 5 3.5"><path d="M0 0h5L2.5 3.5z" fill="#222"/></svg>
<div class="r" style="left:1331.2px;top:538.5px;width:1.0px;height:11.0px;background:#a9c8ec"></div>
<svg class="r" style="left:1337.6px;top:536.0px" width="14" height="15" viewBox="0 0 14 15"><path d="M2 1h10M2 14h10M3 1c0 5 4 5 4 6.5S3 9 3 14M11 1c0 5-4 5-4 6.5S11 9 11 14" stroke="#c08040" stroke-width="1.3" fill="#e8d8b0"/><rect x="3" y="11" width="8" height="3" rx="1" fill="#666"/></svg>
<div class="r" style="left:1357.3px;top:538.5px;width:1.0px;height:11.0px;background:#a9c8ec"></div>
<svg class="r" style="left:1363.8px;top:537.0px" width="14" height="14" viewBox="0 0 16 16"><rect x="1" y="3" width="14" height="10" fill="#dfe6f0" stroke="#7b8fb0"/><path d="M1 3l7 6 7-6" stroke="#7b8fb0" fill="none"/><rect x="4" y="11" width="8" height="4" rx="1.5" fill="#777"/></svg>
<div class="t" style="left:1379.2px;top:538.0px;font-size:9.68px;line-height:12px;color:#444;font-weight:400;">Email</div>
<svg class="r" style="left:1407.4px;top:543.0px" width="5" height="3.5" viewBox="0 0 5 3.5"><path d="M0 0h5L2.5 3.5z" fill="#222"/></svg>
<div class="r" style="left:1420.4px;top:538.5px;width:1.0px;height:11.0px;background:#a9c8ec"></div>
<svg class="r" style="left:1427.5px;top:537.0px" width="14" height="14" viewBox="0 0 16 16"><rect x="2.5" y="1" width="11" height="14" rx="1" fill="#4a7cc0"/><rect x="2.5" y="1" width="2" height="14" fill="#2f5a9a"/><rect x="6" y="3.5" width="5" height="1" fill="#cfe0f5"/></svg>
<div class="t" style="left:1442.2px;top:538.0px;font-size:9.72px;line-height:12px;color:#444;font-weight:400;">Help</div>
<svg class="r" style="left:1469.0px;top:537.5px" width="13" height="13" viewBox="0 0 16 16"><circle cx="8" cy="8" r="7.3" fill="#6d95cc"/><ellipse cx="8" cy="5.5" rx="5" ry="3.8" fill="#fff" opacity="0.16"/><path d="M5.8 6.2a2.2 2.2 0 1 1 3 2c-.7.3-.8.8-.8 1.6" stroke="#fff" stroke-width="1.7" fill="none"/><circle cx="8" cy="12" r="1" fill="#fff"/></svg>
<div class="t" style="left:1482.8px;top:538.0px;font-size:9.48px;line-height:12px;color:#ef5a3a;font-weight:400;">FAQ</div>
<div class="r" style="left:369.0px;top:555.7px;width:1137.0px;height:27.3px;background:#eef0f3"></div>
<div class="r" style="left:372.7px;top:562.0px;width:44.6px;height:21.0px;box-sizing:border-box;background:#f5f8fb;border:1px solid #d6dde3;border-bottom:none;border-radius:7px 7px 0 0"></div>
<div class="t" style="left:381.6px;top:566.5px;font-size:9.57px;line-height:12px;color:#444;font-weight:400;">Hlavní</div>
<div class="r" style="left:419.8px;top:562.0px;width:109.4px;height:21.0px;box-sizing:border-box;background:#f5f8fb;border:1px solid #d6dde3;border-bottom:none;border-radius:7px 7px 0 0"></div>
<div class="t" style="left:428.4px;top:566.0px;font-size:10.2px;line-height:13px;color:#444;font-weight:400;">Doplňující informace</div>
<div class="r" style="left:532.4px;top:562.0px;width:46.2px;height:21.0px;box-sizing:border-box;background:#fafcfe;border:1px solid #d6dde3;border-bottom:none;border-radius:7px 7px 0 0"></div>
<div class="t" style="left:540.7px;top:566.5px;font-size:9.6px;line-height:12px;color:#1f8ee0;font-weight:700;">Nákup</div>
<div class="r" style="left:581.7px;top:562.0px;width:44.6px;height:21.0px;box-sizing:border-box;background:#f5f8fb;border:1px solid #d6dde3;border-bottom:none;border-radius:7px 7px 0 0"></div>
<div class="t" style="left:590.0px;top:566.5px;font-size:9.59px;line-height:12px;color:#444;font-weight:400;">Prodej</div>
<div class="r" style="left:629.5px;top:562.0px;width:91.5px;height:21.0px;box-sizing:border-box;background:#f5f8fb;border:1px solid #d6dde3;border-bottom:none;border-radius:7px 7px 0 0"></div>
<div class="t" style="left:637.4px;top:566.5px;font-size:9.83px;line-height:12px;color:#444;font-weight:400;">Prodejní ceny (1)</div>
<div class="r" style="left:723.6px;top:562.0px;width:45.8px;height:21.0px;box-sizing:border-box;background:#f5f8fb;border:1px solid #d6dde3;border-bottom:none;border-radius:7px 7px 0 0"></div>
<div class="t" style="left:732.2px;top:566.5px;font-size:9.57px;line-height:12px;color:#444;font-weight:400;">Sklady</div>
<div class="r" style="left:772.6px;top:562.0px;width:47.1px;height:21.0px;box-sizing:border-box;background:#f5f8fb;border:1px solid #d6dde3;border-bottom:none;border-radius:7px 7px 0 0"></div>
<div class="t" style="left:780.6px;top:566.5px;font-size:9.57px;line-height:12px;color:#aaa;font-weight:400;">Složení</div>
<div class="r" style="left:822.3px;top:562.0px;width:78.5px;height:21.0px;box-sizing:border-box;background:#f5f8fb;border:1px solid #d6dde3;border-bottom:none;border-radius:7px 7px 0 0"></div>
<div class="t" style="left:830.9px;top:566.0px;font-size:10.43px;line-height:13px;color:#444;font-weight:400;">Vlastnosti (+)</div>
<div class="r" style="left:903.5px;top:562.0px;width:95.5px;height:21.0px;box-sizing:border-box;background:#f5f8fb;border:1px solid #d6dde3;border-bottom:none;border-radius:7px 7px 0 0"></div>
<div class="t" style="left:912.0px;top:566.5px;font-size:9.75px;line-height:12px;color:#444;font-weight:400;">Přiložené soubory</div>
<div class="r" style="left:374.0px;top:587.0px;width:1127.5px;height:86.0px;background:#f8fbfe;border-radius:8px"></div>
<div class="r" style="left:380.7px;top:594.0px;width:551.9px;height:67.0px;box-sizing:border-box;background:#fafcfe;border:1px solid #d3dce3;border-radius:7px;box-shadow:0 1px 2px rgba(0,0,0,0.10)"></div>
<div class="r" style="left:388.0px;top:592.0px;width:92.0px;height:5.0px;background:#fafcfe"></div>
<div class="t" style="left:389.3px;top:588.5px;font-size:9.73px;line-height:12px;color:#222;font-weight:700;">Standardní značení</div>
<div class="t" style="left:389.3px;top:601.7px;font-size:10.3px;line-height:13px;color:#4d4d4d;font-weight:400;">Kód:</div>
<div class="r" style="left:443.4px;top:600.9px;width:159.0px;height:16.1px;box-sizing:border-box;background:#fff;border:1px solid #cbd5dd;border-bottom-color:#a9b7c2;border-radius:4px;box-shadow:0 1px 1px rgba(0,0,0,0.08)"></div>
<div class="t" style="left:389.3px;top:621.4px;font-size:10.3px;line-height:13px;color:#4d4d4d;font-weight:400;">Název:</div>
<div class="r" style="left:443.4px;top:620.0px;width:455.9px;height:17.4px;box-sizing:border-box;background:#fff;border:1px solid #cbd5dd;border-bottom-color:#a9b7c2;border-radius:4px;box-shadow:0 1px 1px rgba(0,0,0,0.08)"></div>
<svg class="r" style="left:445.3px;top:625.5px" width="14" height="9" viewBox="0 0 14 9"><rect width="14" height="4.5" fill="#fff"/><rect y="4.5" width="14" height="4.5" fill="#e03030"/><path d="M0 0l6 4.5L0 9z" fill="#3060c0"/></svg>
<div class="r" style="left:443.4px;top:640.6px;width:9.5px;height:9.6px;border:1px solid #555;border-radius:2px;background:#fff;box-sizing:border-box"></div>
<div class="t" style="left:456.4px;top:640.0px;font-size:10.2px;line-height:13px;color:#4d4d4d;font-weight:400;">Nakupovat s popisy z prodejních dokladů</div>
<div class="r" style="left:941.5px;top:593.2px;width:551.1px;height:67.6px;box-sizing:border-box;background:#fafcfe;border:1px solid #d3dce3;border-radius:7px;box-shadow:0 1px 2px rgba(0,0,0,0.10)"></div>
<div class="r" style="left:946.0px;top:591.2px;width:36.0px;height:5.0px;background:#fafcfe"></div>
<div class="t" style="left:949.2px;top:588.5px;font-size:9.56px;line-height:12px;color:#222;font-weight:700;">Nákup</div>
<div class="t" style="left:949.2px;top:601.2px;font-size:10.06px;line-height:13px;color:#4d4d4d;font-weight:400;">Manipulační množství:</div>
<div class="r" style="left:1116.8px;top:600.0px;width:119.4px;height:17.5px;box-sizing:border-box;background:#fff;border:1px solid #cbd5dd;border-bottom-color:#a9b7c2;border-radius:4px;box-shadow:0 1px 1px rgba(0,0,0,0.08)"></div>
<div class="t" style="right:650.8px;top:602.8px;font-size:10.3px;line-height:13px;color:#3c3c3c;font-weight:400;">2,00</div>
<div class="t" style="left:949.2px;top:621.1px;font-size:10.1px;line-height:13px;color:#4d4d4d;font-weight:400;">Min. nákupní množství:</div>
<div class="r" style="left:1116.8px;top:619.3px;width:119.4px;height:18.2px;box-sizing:border-box;background:#fff;border:1px solid #cbd5dd;border-bottom-color:#a9b7c2;border-radius:4px;box-shadow:0 1px 1px rgba(0,0,0,0.08)"></div>
<div class="r" style="left:375.3px;top:686.4px;width:1126.9px;height:145.6px;box-sizing:border-box;background:#fafcfe;border:1px solid #d3dce3;border-radius:8px;box-shadow:0 1px 2px rgba(0,0,0,0.10)"></div>
<div class="r" style="left:383.0px;top:684.4px;width:109.0px;height:5.0px;background:#fafcfe"></div>
<svg class="r" style="left:386.0px;top:683.0px" width="7" height="6" viewBox="0 0 7 6"><path d="M0 6L3.5 0 7 6z" fill="#2196e8"/></svg>
<div class="t" style="left:397.5px;top:680.4px;font-size:9.85px;line-height:12px;color:#222;font-weight:700;">Značení dodavatele</div>
<div class="r" style="left:381.6px;top:700.7px;width:1098.8px;height:124.1px;background:#fff;border:1px solid #e1e6ea;border-radius:4px;box-sizing:border-box"></div>
<div class="r" style="left:382.6px;top:701.7px;width:1096.8px;height:22.8px;background:#f7fafd;border-bottom:1px solid #e4e9ee;box-sizing:border-box"></div>
<svg class="r" style="left:388.0px;top:707.0px" width="11.5" height="11.5" viewBox="0 0 16 16"><circle cx="8" cy="8" r="7.3" fill="#5db854"/><ellipse cx="8" cy="5.5" rx="5" ry="3.8" fill="#fff" opacity="0.16"/><path d="M4 8h8M8 4v8" stroke="#fff" stroke-width="2.2"/></svg>
<svg class="r" style="left:407.0px;top:707.0px" width="11.5" height="11.5" viewBox="0 0 16 16"><circle cx="8" cy="8" r="7.3" fill="#e0483e"/><ellipse cx="8" cy="5.5" rx="5" ry="3.8" fill="#fff" opacity="0.16"/><path d="M4 8h8" stroke="#fff" stroke-width="2.2"/></svg>
<div class="r" style="left:382.6px;top:724.5px;width:1096.8px;height:20.7px;background:#f7fafd;border-bottom:1px solid #e4e9ee;box-sizing:border-box"></div>
<div class="r" style="left:538.2px;top:726.0px;width:1.0px;height:19.0px;background:#dde3e8"></div>
<div class="r" style="left:694.0px;top:726.0px;width:1.0px;height:19.0px;background:#dde3e8"></div>
<div class="r" style="left:850.0px;top:726.0px;width:1.0px;height:19.0px;background:#dde3e8"></div>
<div class="r" style="left:1160.5px;top:726.0px;width:1.0px;height:19.0px;background:#dde3e8"></div>
<div class="r" style="left:1316.0px;top:726.0px;width:1.0px;height:19.0px;background:#dde3e8"></div>
<div class="r" style="left:1472.0px;top:726.0px;width:1.0px;height:19.0px;background:#dde3e8"></div>
<div class="t" style="left:388.0px;top:728.5px;font-size:10.2px;line-height:13px;color:#444;font-weight:400;">Společnost</div>
<div class="t" style="left:543.6px;top:728.5px;font-size:10.2px;line-height:13px;color:#444;font-weight:400;">Kód</div>
<div class="t" style="left:699.5px;top:728.5px;font-size:10.2px;line-height:13px;color:#444;font-weight:400;">Název</div>
<div class="t" style="left:855.0px;top:728.5px;font-size:10.2px;line-height:13px;color:#444;font-weight:400;">Popis</div>
<div class="t" style="left:1166.0px;top:728.5px;font-size:10.2px;line-height:13px;color:#444;font-weight:400;">Čárový kód</div>
<div class="t" style="right:427.2px;top:728.5px;font-size:10.2px;line-height:13px;color:#444;font-weight:400;">Dodací doba</div>
<div class="r" style="left:382.6px;top:745.2px;width:1090.4px;height:18.2px;background:#fdebdc;outline:1px dotted #2aa0d8;outline-offset:-1px"></div>
<div class="t" style="left:388.0px;top:748.0px;font-size:10.1px;line-height:13px;color:#333;font-weight:400;">HIT OBCHOD S.R.O.</div>
<svg class="r" style="left:382.0px;top:746.0px" width="5" height="5" viewBox="0 0 5 5"><path d="M0 0h5L0 5z" fill="#d01010"/></svg>
<div class="t" style="left:543.6px;top:748.0px;font-size:10.1px;line-height:13px;color:#333;font-weight:400;">BRP_01_MAN</div>
<svg class="r" style="left:537.6px;top:746.0px" width="5" height="5" viewBox="0 0 5 5"><path d="M0 0h5L0 5z" fill="#d01010"/></svg>
<div class="t" style="left:699.5px;top:748.0px;font-size:10.1px;line-height:13px;color:#333;font-weight:400;">Barelová pumpa ruční</div>
<svg class="r" style="left:693.5px;top:746.0px" width="5" height="5" viewBox="0 0 5 5"><path d="M0 0h5L0 5z" fill="#d01010"/></svg>
<div class="t" style="left:855.0px;top:748.0px;font-size:10.07px;line-height:13px;color:#333;font-weight:400;">Ruční pumpa pro mechanické dávkování vody z pitných barelů. S...</div>
<svg class="r" style="left:849.0px;top:746.0px" width="5" height="5" viewBox="0 0 5 5"><path d="M0 0h5L0 5z" fill="#d01010"/></svg>
<div class="r" style="left:375.2px;top:840.0px;width:1126.8px;height:370.0px;background:#f7fafd;border:1px solid #e3e8ec;border-radius:5px;box-sizing:border-box"></div>
<div class="t" style="left:379.7px;top:842.7px;font-size:10.23px;line-height:13px;color:#222;font-weight:700;">Pořizovací ceny</div>
<div class="r" style="left:375.2px;top:858.0px;width:1126.8px;height:353.0px;background:#e2e3e5;border-radius:0 0 5px 5px"></div>
<svg class="r" style="left:380.7px;top:864.0px" width="11" height="11" viewBox="0 0 16 16"><circle cx="8" cy="8" r="7.3" fill="#9fcf98"/><ellipse cx="8" cy="5.5" rx="5" ry="3.8" fill="#fff" opacity="0.16"/><path d="M4 8h8M8 4v8" stroke="#fff" stroke-width="2.2"/></svg>
<div class="t" style="left:394.4px;top:863.5px;font-size:9.83px;line-height:12px;color:#8e9296;font-weight:400;">Nový záznam</div>
<svg class="r" style="left:461.8px;top:862.5px" width="12" height="13" viewBox="0 0 12 13"><rect x="0" y="1" width="7" height="12" fill="#c8c8c8"/><path d="M6 2l6-1.5v12.5l-6-1z" fill="#e0d0b0"/></svg>
<div class="t" style="left:475.2px;top:863.0px;font-size:10.01px;line-height:13px;color:#a8abae;font-weight:400;">Otevřít jako nový záznam</div>
<div class="t" style="right:660.5px;top:863.5px;font-size:9.91px;line-height:12px;color:#a8abae;font-weight:400;">Zrušit výběr</div>
<div class="r" style="left:1231.6px;top:864.5px;width:1.0px;height:10.0px;background:#b8c8dc"></div>
<svg class="r" style="left:1240.0px;top:863.8px" width="11.4" height="11.4" viewBox="0 0 16 16"><circle cx="8" cy="8" r="7.3" fill="#eaa8a0"/><ellipse cx="8" cy="5.5" rx="5" ry="3.8" fill="#fff" opacity="0.16"/><path d="M4 8h8" stroke="#fff" stroke-width="2.2"/></svg>
<div class="t" style="left:1253.7px;top:863.5px;font-size:10.0px;line-height:12px;color:#a8abae;font-weight:400;">Smazat označené</div>
<div class="r" style="left:1340.6px;top:864.5px;width:1.0px;height:10.0px;background:#b8c8dc"></div>
<svg class="r" style="left:1349.0px;top:863.5px" width="10" height="12" viewBox="0 0 10 12"><path d="M8 2a5 5 0 1 0 1 8" stroke="#7a90c8" stroke-width="2.2" fill="none"/></svg>
<div class="t" style="left:1362.0px;top:863.5px;font-size:9.38px;line-height:12px;color:#8e9296;font-weight:400;">Obnovit</div>
<svg class="r" style="left:1404.0px;top:863.5px" width="12" height="12" viewBox="0 0 12 12"><path d="M10 3a5 5 0 1 0 0 7" stroke="#5aaa4a" stroke-width="3" fill="none"/></svg>
<div class="t" style="left:1417.6px;top:863.5px;font-size:9.38px;line-height:12px;color:#8e9296;font-weight:400;">Filtry...</div>
<svg class="r" style="left:1445.0px;top:869.5px" width="5" height="3.5" viewBox="0 0 5 3.5"><path d="M0 0h5L2.5 3.5z" fill="#222"/></svg>
<div class="r" style="left:1458.2px;top:864.5px;width:1.0px;height:10.0px;background:#b8c8dc"></div>
<svg class="r" style="left:1466.0px;top:863.5px" width="12" height="12" viewBox="0 0 16 16"><circle cx="8" cy="8" r="7.3" fill="#8aa4cc"/><ellipse cx="8" cy="5.5" rx="5" ry="3.8" fill="#fff" opacity="0.16"/><path d="M5.8 6.2a2.2 2.2 0 1 1 3 2c-.7.3-.8.8-.8 1.6" stroke="#fff" stroke-width="1.7" fill="none"/><circle cx="8" cy="12" r="1" fill="#fff"/></svg>
<div class="t" style="left:1479.7px;top:863.5px;font-size:9.38px;line-height:12px;color:#8e9296;font-weight:400;">FAQ</div>
<div class="r" style="left:375.2px;top:882.5px;width:1126.8px;height:1.0px;background:#d6d8da"></div>
<div class="t" style="left:380.7px;top:885.5px;font-size:10.2px;line-height:13px;color:#8e9296;font-weight:400;">Dodavatel</div>
<div class="r" style="left:553.4px;top:883.5px;width:1.0px;height:38.0px;background:#d6d8da"></div>
<div class="r" style="left:554.4px;top:883.5px;width:48.6px;height:18.0px;background:#d9dfe6"></div>
<div class="t" style="left:558.8px;top:885.5px;font-size:10.2px;line-height:13px;color:#8e9296;font-weight:400;">Datum</div>
<svg class="r" style="left:591.5px;top:890.5px" width="6" height="4" viewBox="0 0 6 4"><path d="M0 0h6L3 4z" fill="#8aa8d0"/></svg>
<div class="t" style="right:631.4px;top:885.1px;font-size:10.2px;line-height:13px;color:#8e9296;font-weight:400;">Sleva (-)/Přirážka (+) %</div>
<div class="t" style="right:453.0px;top:885.1px;font-size:10.12px;line-height:13px;color:#8e9296;font-weight:400;">Cena po slevě</div>
<div class="r" style="left:1268.3px;top:883.5px;width:1.0px;height:38.0px;background:#d6d8da"></div>
<div class="r" style="left:1446.4px;top:883.5px;width:1.0px;height:38.0px;background:#d6d8da"></div>
<div class="r" style="left:1492.6px;top:883.5px;width:1.0px;height:38.0px;background:#d6d8da"></div>
<div class="r" style="left:379.7px;top:903.4px;width:170.5px;height:16.0px;border:1px solid #c8ccd0;border-bottom-color:#b0b6bc;border-radius:4px;box-sizing:border-box"></div>
<div class="r" style="left:557.2px;top:903.4px;width:45.8px;height:16.0px;border:1px solid #c8ccd0;border-bottom-color:#b0b6bc;border-radius:4px;box-sizing:border-box"></div>
<div class="r" style="left:1090.0px;top:903.5px;width:174.6px;height:16.1px;border:1px solid #c8ccd0;border-bottom-color:#b0b6bc;border-radius:4px;box-sizing:border-box"></div>
<div class="r" style="left:1272.0px;top:903.5px;width:171.3px;height:16.1px;border:1px solid #c8ccd0;border-bottom-color:#b0b6bc;border-radius:4px;box-sizing:border-box"></div>
<div class="r" style="left:375.2px;top:921.5px;width:1126.8px;height:1.0px;background:#d6d8da"></div>
<div class="r" style="left:375.2px;top:1187.4px;width:1126.8px;height:1.0px;background:#d3d5d7"></div>
<svg class="r" style="left:382.0px;top:1194.3px" width="9" height="10" viewBox="0 0 9 10"><rect x="0" y="0" width="2" height="10" fill="#b0b2b4"/><path d="M9 0v10L3 5z" fill="#b0b2b4"/></svg>
<svg class="r" style="left:402.0px;top:1194.3px" width="6" height="10" viewBox="0 0 6 10"><path d="M6 0v10L0 5z" fill="#b0b2b4"/></svg>
<div class="r" style="left:417.5px;top:1194.3px;width:1.0px;height:10.0px;background:#b8c8dc"></div>
<div class="t" style="left:423.5px;top:1192.8px;font-size:10.2px;line-height:13px;color:#8e9296;font-weight:400;">Strana</div>
<div class="r" style="left:455.3px;top:1191.3px;width:23.0px;height:16.0px;border:1px solid #c8ccd0;border-radius:4px;box-sizing:border-box"></div>
<div class="t" style="right:1409.0px;top:1192.8px;font-size:10.2px;line-height:13px;color:#8e9296;font-weight:400;">1</div>
<div class="t" style="left:480.5px;top:1192.8px;font-size:10.2px;line-height:13px;color:#8e9296;font-weight:400;">z 1</div>
<div class="r" style="left:494.5px;top:1194.3px;width:1.0px;height:10.0px;background:#b8c8dc"></div>
<svg class="r" style="left:507.5px;top:1194.3px" width="6" height="10" viewBox="0 0 6 10"><path d="M0 0v10L6 5z" fill="#b0b2b4"/></svg>
<svg class="r" style="left:523.0px;top:1194.3px" width="9" height="10" viewBox="0 0 9 10"><path d="M0 0v10L6 5z" fill="#b0b2b4"/><rect x="7" y="0" width="2" height="10" fill="#b0b2b4"/></svg>
<div class="r" style="left:540.2px;top:1194.3px;width:1.0px;height:10.0px;background:#b8c8dc"></div>
<svg class="r" style="left:546.5px;top:1193.3px" width="13" height="12" viewBox="0 0 13 12"><path d="M2 6a4.5 4.5 0 0 1 8-3M11 6a4.5 4.5 0 0 1-8 3" stroke="#5a9ae0" stroke-width="2" fill="none"/></svg>
<div class="r" style="left:566.0px;top:1194.3px;width:1.0px;height:10.0px;background:#b8c8dc"></div>
<svg class="r" style="left:573.0px;top:1191.3px" width="13" height="14" viewBox="0 0 13 14"><path d="M1 1l5 5" stroke="#4cae3c" stroke-width="2"/><rect x="5" y="6" width="8" height="8" fill="#7a9ad0"/><rect x="7" y="10" width="4" height="3" fill="#c8e08a"/></svg>
<div class="t" style="left:588.0px;top:1192.8px;font-size:10.2px;line-height:13px;color:#8e9296;font-weight:400;">Export</div>
<div class="t" style="right:387.3px;top:1192.8px;font-size:10.03px;line-height:13px;color:#8e9296;font-weight:400;">Žádné záznamy nebyly nalezeny</div>
<div class="r" style="left:604px;top:862px;width:489px;height:334px;background:#fff;border-radius:6px;box-shadow:4px 4px 14px rgba(0,0,0,0.28)"></div>
<div class="r" style="left:604.0px;top:862.0px;width:489.0px;height:21.4px;background:#fafcfe;border-bottom:1px solid #c9d6e0;border-radius:6px 6px 0 0;box-sizing:border-box"></div>
<div class="t" style="left:609.0px;top:866.5px;font-size:12.33px;line-height:15px;color:#1f8ee0;font-weight:700;">[Pořizovací ceny produktů]</div>
<svg class="r" style="left:1078.5px;top:867.5px" width="7" height="7" viewBox="0 0 8 8"><path d="M1 1l6 6M7 1l-6 6" stroke="#2a9ce8" stroke-width="1.5"/></svg>
<div class="r" style="left:613.0px;top:884.0px;width:475.0px;height:24.5px;background:#f7fafd;border-bottom:1px solid #e1e7ec;box-sizing:border-box"></div>
<svg class="r" style="left:613.9px;top:888.5px" width="14" height="14" viewBox="0 0 16 16"><rect x="0.6" y="0.6" width="14.8" height="14.8" rx="2" fill="#5d8bd2" stroke="#3b68b3" stroke-width="0.9"/><rect x="3" y="1.2" width="10" height="4.3" fill="#e9f0fa"/><rect x="4" y="1.6" width="1.3" height="2.6" fill="#3b68b3"/><rect x="2.3" y="8.6" width="11.4" height="6.4" fill="#eef3fa"/><rect x="3.3" y="10" width="9.4" height="3.6" fill="#8cc870"/></svg>
<div class="t" style="left:628.8px;top:889.5px;font-size:9.55px;line-height:12px;color:#444;font-weight:400;">Uložit</div>
<div class="r" style="left:659.0px;top:890.0px;width:1.0px;height:11.0px;background:#a9c8ec"></div>
<svg class="r" style="left:664.8px;top:888.5px" width="14" height="14" viewBox="0 0 16 16"><rect x="0.6" y="0.6" width="14.8" height="14.8" rx="2" fill="#5d8bd2" stroke="#3b68b3" stroke-width="0.9"/><rect x="3" y="1.2" width="10" height="4.3" fill="#e9f0fa"/><rect x="4" y="1.6" width="1.3" height="2.6" fill="#3b68b3"/><rect x="2.3" y="8.6" width="11.4" height="6.4" fill="#eef3fa"/><rect x="3.3" y="10" width="9.4" height="3.6" fill="#8cc870"/><circle cx="11.8" cy="11.8" r="4" fill="#4cb04a"/><path d="M9.8 11.8h4M11.8 9.8v4" stroke="#fff" stroke-width="1.4"/></svg>
<div class="t" style="left:679.7px;top:889.5px;font-size:9.93px;line-height:12px;color:#444;font-weight:400;">Uložit+nový</div>
<svg class="r" style="left:738.0px;top:888.5px" width="14" height="14" viewBox="0 0 16 16"><rect x="0.6" y="0.6" width="14.8" height="14.8" rx="2" fill="#5d8bd2" stroke="#3b68b3" stroke-width="0.9"/><rect x="3" y="1.2" width="10" height="4.3" fill="#e9f0fa"/><rect x="4" y="1.6" width="1.3" height="2.6" fill="#3b68b3"/><rect x="2.3" y="8.6" width="11.4" height="6.4" fill="#eef3fa"/><rect x="3.3" y="10" width="9.4" height="3.6" fill="#8cc870"/><rect x="8.5" y="8.5" width="7.2" height="7.2" rx="1.5" fill="#e03030"/><path d="M10.5 10.5l3.2 3.2M13.7 10.5l-3.2 3.2" stroke="#fff" stroke-width="1.3"/></svg>
<div class="t" style="left:752.3px;top:889.5px;font-size:9.78px;line-height:12px;color:#444;font-weight:400;">Uložit+zavřít</div>
<div class="r" style="left:812.4px;top:890.0px;width:1.0px;height:11.0px;background:#a9c8ec"></div>
<svg class="r" style="left:820.3px;top:889.5px" width="12" height="12" viewBox="0 0 16 16"><circle cx="8" cy="8" r="7.3" fill="#eaa8a0"/><ellipse cx="8" cy="5.5" rx="5" ry="3.8" fill="#fff" opacity="0.16"/><path d="M4 8h8" stroke="#fff" stroke-width="2.2"/></svg>
<div class="t" style="left:833.4px;top:889.0px;font-size:10.21px;line-height:13px;color:#a0a0a0;font-weight:400;">Smazat</div>
<div class="r" style="left:873.8px;top:890.0px;width:1.0px;height:11.0px;background:#a9c8ec"></div>
<svg class="r" style="left:1018.0px;top:888.5px" width="13" height="13" viewBox="0 0 16 16"><rect x="1" y="1" width="10" height="12" fill="#e6eef8" stroke="#7d9ccc"/><path d="M2 4h8M2 7h8M2 10h8" stroke="#9fc06a"/><rect x="7" y="8" width="8" height="8" rx="1" fill="#5b87c9"/><rect x="9" y="12" width="4" height="3" fill="#c9e08a"/></svg>
<svg class="r" style="left:1033.0px;top:895.5px" width="5" height="3.5" viewBox="0 0 5 3.5"><path d="M0 0h5L2.5 3.5z" fill="#222"/></svg>
<div class="r" style="left:1045.0px;top:890.0px;width:1.0px;height:11.0px;background:#a9c8ec"></div>
<svg class="r" style="left:1053.0px;top:889.5px" width="12" height="12" viewBox="0 0 16 16"><circle cx="8" cy="8" r="7.3" fill="#6d95cc"/><ellipse cx="8" cy="5.5" rx="5" ry="3.8" fill="#fff" opacity="0.16"/><path d="M5.8 6.2a2.2 2.2 0 1 1 3 2c-.7.3-.8.8-.8 1.6" stroke="#fff" stroke-width="1.7" fill="none"/><circle cx="8" cy="12" r="1" fill="#fff"/></svg>
<div class="t" style="left:1066.5px;top:889.5px;font-size:10px;line-height:12px;color:#444;font-weight:400;">FAQ</div>
<div class="r" style="left:613.0px;top:908.5px;width:475.0px;height:276.5px;background:#fff"></div>
<div class="t" style="left:614.5px;top:915.7px;font-size:10.2px;line-height:13px;color:#4d4d4d;font-weight:400;">Dodavatel:</div>
<div class="r" style="left:729.3px;top:914.3px;width:335.7px;height:17.1px;box-sizing:border-box;background:#fff;border:1px solid #cbd5dd;border-bottom-color:#a9b7c2;border-radius:4px;box-shadow:0 1px 1px rgba(0,0,0,0.08)"></div>
<div class="r" style="left:1051.5px;top:915.3px;width:13.5px;height:15.1px;background:#eef1f4;border-left:1px solid #dce3e9;box-sizing:border-box;border-radius:0 4px 4px 0;"></div>
<svg class="r" style="left:1054.2px;top:919.2px" width="8.0" height="5.6" viewBox="0 0 10 7"><path d="M0 0L2.8 0 5 2 7.2 0 10 0 5 7z" fill="#1d8fe0"/></svg>
<div class="r" style="left:1038.0px;top:915.3px;width:13.5px;height:15.1px;background:#eef1f4;border-left:1px solid #dce3e9;box-sizing:border-box;"></div>
<svg class="r" style="left:1039.5px;top:917.6px" width="10.4" height="10.4" viewBox="0 0 13 13"><circle cx="5.3" cy="5.3" r="4.1" stroke="#18a2de" stroke-width="1.8" fill="none"/><path d="M8.2 8.2l3.8 3.8" stroke="#18a2de" stroke-width="2"/></svg>
<div class="r" style="left:1024.5px;top:915.3px;width:13.5px;height:15.1px;background:#eef1f4;border-left:1px solid #dce3e9;box-sizing:border-box;"></div>
<svg class="r" style="left:1027.2px;top:918.8px" width="8.0" height="8.0" viewBox="0 0 10 10"><path d="M5 0.5v9M0.5 5h9" stroke="#2fbf45" stroke-width="1.6"/></svg>
<div class="t" style="left:732.3px;top:916.8px;font-size:10.1px;line-height:13px;color:#3c3c3c;font-weight:400;overflow:hidden;max-width:291.2px">HIT OBCHOD S.R.O.</div>
<div class="t" style="left:614.5px;top:935.8px;font-size:10.2px;line-height:13px;color:#4d4d4d;font-weight:400;">Produkt:</div>
<div class="r" style="left:729.3px;top:934.5px;width:335.7px;height:16.5px;box-sizing:border-box;background:#fff;border:1px solid #dde3e8;border-bottom-color:#a9b7c2;border-radius:4px;box-shadow:0 1px 1px rgba(0,0,0,0.08)"></div>
<div class="r" style="left:1051.5px;top:935.5px;width:13.5px;height:14.5px;background:#eef1f4;border-left:1px solid #dce3e9;box-sizing:border-box;border-radius:0 4px 4px 0;"></div>
<svg class="r" style="left:1054.2px;top:939.2px" width="8.0" height="5.6" viewBox="0 0 10 7"><path d="M0 0L2.8 0 5 2 7.2 0 10 0 5 7z" fill="#1d8fe0"/></svg>
<div class="r" style="left:1038.0px;top:935.5px;width:13.5px;height:14.5px;background:#eef1f4;border-left:1px solid #dce3e9;box-sizing:border-box;"></div>
<svg class="r" style="left:1039.5px;top:937.5px" width="10.4" height="10.4" viewBox="0 0 13 13"><circle cx="5.3" cy="5.3" r="4.1" stroke="#18a2de" stroke-width="1.8" fill="none"/><path d="M8.2 8.2l3.8 3.8" stroke="#18a2de" stroke-width="2"/></svg>
<div class="r" style="left:1024.5px;top:935.5px;width:13.5px;height:14.5px;background:#eef1f4;border-left:1px solid #dce3e9;box-sizing:border-box;"></div>
<svg class="r" style="left:1027.2px;top:938.8px" width="8.0" height="8.0" viewBox="0 0 10 10"><path d="M5 0.5v9M0.5 5h9" stroke="#2fbf45" stroke-width="1.6"/></svg>
<div class="t" style="left:732.3px;top:936.8px;font-size:10.1px;line-height:13px;color:#a0a0a0;font-weight:400;overflow:hidden;max-width:291.2px">BRP Barelová pumpa ruční</div>
<div class="t" style="left:614.5px;top:955.5px;font-size:10.2px;line-height:13px;color:#4d4d4d;font-weight:400;">Datum:</div>
<div class="r" style="left:729.3px;top:954.0px;width:77.7px;height:17.0px;box-sizing:border-box;background:#fff;border:1px solid #cbd5dd;border-bottom-color:#a9b7c2;border-radius:4px;box-shadow:0 1px 1px rgba(0,0,0,0.08)"></div>
<div class="r" style="left:793.3px;top:955.0px;width:13.7px;height:15.0px;background:#eef1f4;border-left:1px solid #dce3e9;box-sizing:border-box;border-radius:0 4px 4px 0;"></div>
<svg class="r" style="left:795.4px;top:957.7px" width="9.600000000000001" height="8.2" viewBox="0 0 12 10"><rect x="0.5" y="0.5" width="11" height="9" fill="#e4f2fb" stroke="#26a4de"/><rect x="0.5" y="0.5" width="11" height="2.5" fill="#26a4de"/><rect x="3" y="5" width="6" height="2.5" fill="#9fd2ee"/></svg>
<div class="t" style="left:732.3px;top:956.5px;font-size:10.1px;line-height:13px;color:#3c3c3c;font-weight:400;overflow:hidden;max-width:60.0px">05.03.2024</div>
<div class="t" style="left:614.5px;top:974.5px;font-size:10.2px;line-height:13px;color:#4d4d4d;font-weight:400;">Cena:</div>
<div class="r" style="left:729.3px;top:974.0px;width:77.7px;height:16.0px;box-sizing:border-box;background:#fff;border:1px solid #cbd5dd;border-bottom-color:#a9b7c2;border-radius:4px;box-shadow:0 1px 1px rgba(0,0,0,0.08)"></div>
<div class="t" style="right:1080.0px;top:976.0px;font-size:10.1px;line-height:13px;color:#3c3c3c;font-weight:400;">1 250,00</div>
<div class="r" style="left:814.3px;top:974.0px;width:45.7px;height:16.0px;box-sizing:border-box;background:#fff;border:1px solid #cbd5dd;border-bottom-color:#a9b7c2;border-radius:4px;box-shadow:0 1px 1px rgba(0,0,0,0.08)"></div>
<div class="r" style="left:846.0px;top:975.0px;width:14.0px;height:14.0px;background:#eef1f4;border-left:1px solid #dce3e9;box-sizing:border-box;border-radius:0 4px 4px 0;"></div>
<svg class="r" style="left:849.0px;top:978.4px" width="8.0" height="5.6" viewBox="0 0 10 7"><path d="M0 0L2.8 0 5 2 7.2 0 10 0 5 7z" fill="#1d8fe0"/></svg>
<div class="t" style="left:817.3px;top:976.0px;font-size:10.1px;line-height:13px;color:#3c3c3c;font-weight:400;overflow:hidden;max-width:27.7px">CZK</div>
<div class="t" style="left:614.5px;top:994.3px;font-size:10.13px;line-height:13px;color:#4d4d4d;font-weight:400;">Sleva (-)/Přirážka (+) %:</div>
<div class="r" style="left:729.3px;top:993.8px;width:77.7px;height:16.2px;box-sizing:border-box;background:#fff;border:1px solid #cbd5dd;border-bottom-color:#a9b7c2;border-radius:4px;box-shadow:0 1px 1px rgba(0,0,0,0.08)"></div>
<div class="r" style="left:615.7px;top:1019.0px;width:452.7px;height:52.7px;box-sizing:border-box;background:#fbfdff;border:1px solid #d3dce3;border-radius:7px;box-shadow:0 1px 2px rgba(0,0,0,0.10)"></div>
<div class="r" style="left:622.0px;top:1017.0px;width:112.0px;height:5.0px;background:#fbfdff"></div>
<svg class="r" style="left:627.0px;top:1016.0px" width="6" height="5" viewBox="0 0 6 5"><path d="M0 5L3 0 6 5z" fill="#2196e8"/></svg>
<div class="t" style="left:637.9px;top:1013.0px;font-size:9.65px;line-height:12px;color:#222;font-weight:700;">Návrh prodejní ceny</div>
<div class="t" style="left:621.6px;top:1027.8px;font-size:9.98px;line-height:12px;color:#4d4d4d;font-weight:400;">Navrhnout/uložit, Ceník, Datum:</div>
<svg class="r" style="left:773.0px;top:1027.0px" width="10" height="10" viewBox="0 0 10 10"><rect width="10" height="10" rx="2" fill="#1a73e8"/><path d="M2.2 5.2l2 2 3.8-4" stroke="#fff" stroke-width="1.5" fill="none"/></svg>
<div class="r" style="left:870.4px;top:1026.5px;width:91.1px;height:16.8px;box-sizing:border-box;background:#fff;border:1px solid #cbd5dd;border-bottom-color:#a9b7c2;border-radius:4px;box-shadow:0 1px 1px rgba(0,0,0,0.08)"></div>
<div class="r" style="left:947.5px;top:1027.5px;width:14.0px;height:14.8px;background:#eef1f4;border-left:1px solid #dce3e9;box-sizing:border-box;border-radius:0 4px 4px 0;"></div>
<svg class="r" style="left:950.5px;top:1031.3px" width="8.0" height="5.6" viewBox="0 0 10 7"><path d="M0 0L2.8 0 5 2 7.2 0 10 0 5 7z" fill="#1d8fe0"/></svg>
<div class="r" style="left:933.5px;top:1027.5px;width:14.0px;height:14.8px;background:#eef1f4;border-left:1px solid #dce3e9;box-sizing:border-box;"></div>
<svg class="r" style="left:936.9px;top:1031.3px" width="7.2" height="7.2" viewBox="0 0 10 10"><path d="M1 1l8 8M9 1l-8 8" stroke="#f0561e" stroke-width="2"/></svg>
<div class="t" style="left:873.4px;top:1028.9px;font-size:10.1px;line-height:13px;color:#3c3c3c;font-weight:400;overflow:hidden;max-width:59.1px">PRODEJ Prode</div>
<div class="r" style="left:968.3px;top:1026.5px;width:90.9px;height:16.8px;box-sizing:border-box;background:#fff;border:1px solid #cbd5dd;border-bottom-color:#a9b7c2;border-radius:4px;box-shadow:0 1px 1px rgba(0,0,0,0.08)"></div>
<div class="r" style="left:1045.4px;top:1027.5px;width:13.8px;height:14.8px;background:#eef1f4;border-left:1px solid #dce3e9;box-sizing:border-box;border-radius:0 4px 4px 0;"></div>
<svg class="r" style="left:1047.5px;top:1030.1px" width="9.600000000000001" height="8.2" viewBox="0 0 12 10"><rect x="0.5" y="0.5" width="11" height="9" fill="#e4f2fb" stroke="#26a4de"/><rect x="0.5" y="0.5" width="11" height="2.5" fill="#26a4de"/><rect x="3" y="5" width="6" height="2.5" fill="#9fd2ee"/></svg>
<div class="t" style="left:971.3px;top:1028.9px;font-size:10.1px;line-height:13px;color:#3c3c3c;font-weight:400;overflow:hidden;max-width:73.1px">05.03.2024</div>
<div class="t" style="left:621.6px;top:1047.5px;font-size:9.71px;line-height:12px;color:#4d4d4d;font-weight:400;">Metoda, %, Nová cena:</div>
<div class="r" style="left:773.0px;top:1045.4px;width:90.0px;height:17.3px;box-sizing:border-box;background:#fff;border:1px solid #5bbbe8;border-radius:4px;box-shadow:0 1px 1px rgba(0,0,0,0.08)"></div>
<div class="r" style="left:849.3px;top:1046.4px;width:13.7px;height:15.3px;background:#eef1f4;border-left:1px solid #dce3e9;box-sizing:border-box;border-radius:0 4px 4px 0;"></div>
<svg class="r" style="left:852.1px;top:1050.5px" width="8.0" height="5.6" viewBox="0 0 10 7"><path d="M0 0L2.8 0 5 2 7.2 0 10 0 5 7z" fill="#1d8fe0"/></svg>
<div class="r" style="left:835.6px;top:1046.4px;width:13.7px;height:15.3px;background:#eef1f4;border-left:1px solid #dce3e9;box-sizing:border-box;"></div>
<svg class="r" style="left:838.8px;top:1050.5px" width="7.2" height="7.2" viewBox="0 0 10 10"><path d="M1 1l8 8M9 1l-8 8" stroke="#f0561e" stroke-width="2"/></svg>
<div class="r" style="left:774.4px;top:1048.0px;width:60.9px;height:13.6px;background:#3d5fc8"></div>
<div class="t" style="left:775.5px;top:1048.3px;font-size:10.1px;line-height:13px;color:#fff;font-weight:400;overflow:hidden;width:59px">Přirážka na d</div>
<div class="r" style="left:870.4px;top:1046.0px;width:91.1px;height:16.7px;box-sizing:border-box;background:#fff;border:1px solid #cbd5dd;border-bottom-color:#a9b7c2;border-radius:4px;box-shadow:0 1px 1px rgba(0,0,0,0.08)"></div>
<div class="t" style="right:925.5px;top:1048.3px;font-size:10.1px;line-height:13px;color:#3c3c3c;font-weight:400;">60,00</div>
<div class="r" style="left:968.3px;top:1046.0px;width:90.9px;height:16.7px;box-sizing:border-box;background:#fff;border:1px solid #cbd5dd;border-bottom-color:#a9b7c2;border-radius:4px;box-shadow:0 1px 1px rgba(0,0,0,0.08)"></div>
<div class="t" style="right:827.8px;top:1048.3px;font-size:10.1px;line-height:13px;color:#3c3c3c;font-weight:400;">2 000,00</div>
<div class="r" style="left:773px;top:1064px;width:245.6px;height:61.2px;background:#fff;border:1px solid #c8d4de;box-sizing:border-box;box-shadow:2px 3px 5px rgba(0,0,0,0.18)"></div>
<div class="t" style="left:775.7px;top:1066.0px;font-size:10.1px;line-height:13px;color:#333;font-weight:400;">Přirážka na produktu / typu produktu</div>
<div class="r" style="left:774.0px;top:1082.5px;width:243.6px;height:16.7px;background:#fde8dd;border:1px dotted #bbb;box-sizing:border-box"></div>
<div class="t" style="left:775.7px;top:1084.1px;font-size:10.1px;line-height:13px;color:#333;font-weight:400;">Přirážka na dodavateli</div>
<div class="t" style="left:775.7px;top:1103.0px;font-size:10.1px;line-height:13px;color:#333;font-weight:400;">Marže na dodavateli</div>
<div class="r" style="left:774.0px;top:1118.5px;width:243.6px;height:6.5px;background:#c8d6e2;border-top:1px solid #5aaae8;box-sizing:border-box"></div>
</body></html>
